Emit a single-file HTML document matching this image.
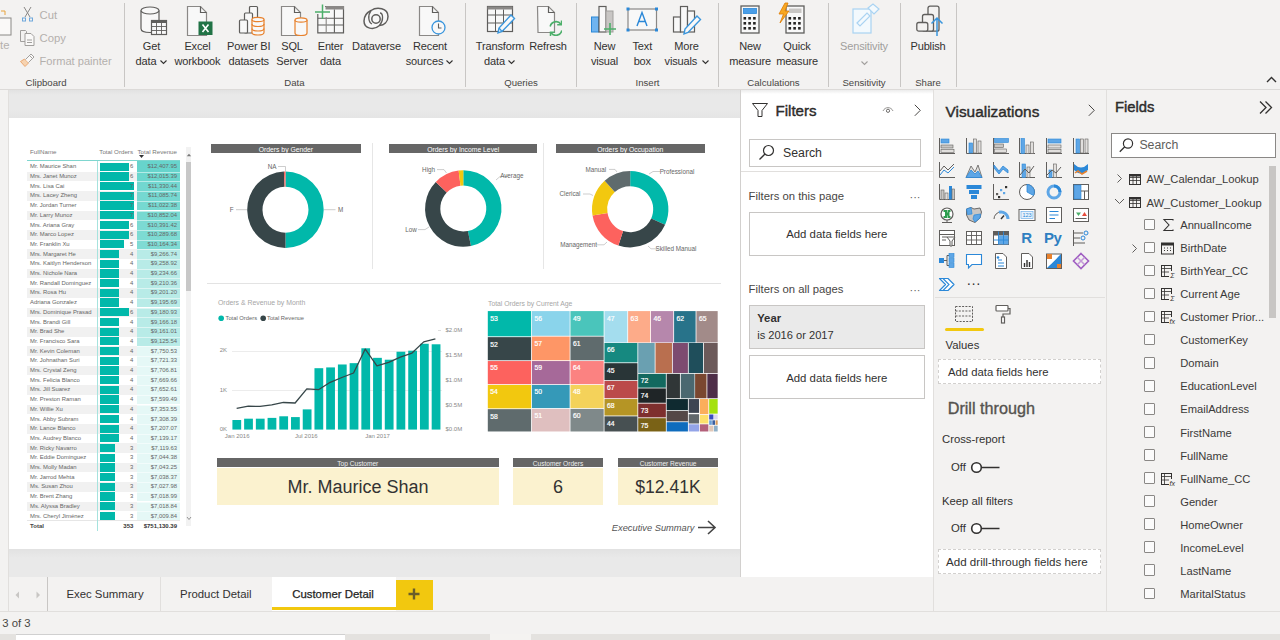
<!DOCTYPE html><html><head><meta charset="utf-8"><style>
html,body{margin:0;padding:0;width:1280px;height:640px;overflow:hidden;background:#f3f2f1;position:relative;font-family:"Liberation Sans", sans-serif;}
.t{position:absolute;white-space:nowrap;}
.r{position:absolute;}
</style></head><body>
<div class="r" style="left:0.00px;top:0.00px;width:1280.00px;height:89.00px;background:#f3f2f1;"></div>
<div class="r" style="left:0.00px;top:89.00px;width:1280.00px;height:1.00px;background:#dcdad8;"></div>
<div class="r" style="left:9.00px;top:90.00px;width:731.00px;height:487.00px;background:#e9e9e9;background:linear-gradient(#e2e2e2 0px,#e9e9e9 5px,#e9e9e9 20px,#e5e5e5 27.5px,#e9e9e9 28px,#e9e9e9 100%);"></div>
<div class="r" style="left:0.00px;top:90.00px;width:8.00px;height:521.00px;background:#f3f2f1;"></div>
<div class="r" style="left:8.00px;top:90.00px;width:1.00px;height:521.00px;background:#e1dfdd;"></div>
<div class="r" style="left:9.00px;top:548.00px;width:731.00px;height:10.00px;background:linear-gradient(#e1e1e1,#e9e9e9);"></div>
<div class="r" style="left:9.00px;top:117.50px;width:731.00px;height:431.00px;background:#ffffff;"></div>
<div class="r" style="left:740.00px;top:90.00px;width:193.00px;height:487.00px;background:#ffffff;"></div>
<div class="r" style="left:740.00px;top:90.00px;width:1.00px;height:521.00px;background:#d2d0ce;"></div>
<div class="r" style="left:933.00px;top:90.00px;width:1.00px;height:521.00px;background:#e1dfdd;"></div>
<div class="r" style="left:1106.00px;top:90.00px;width:1.00px;height:521.00px;background:#e1dfdd;"></div>
<div class="r" style="left:9.00px;top:577.00px;width:924.00px;height:34.00px;background:#f3f2f1;"></div>
<div class="r" style="left:0.00px;top:611.00px;width:1280.00px;height:1.00px;background:#e1dfdd;"></div>
<div class="r" style="left:0.00px;top:634.00px;width:1280.00px;height:6.00px;background:#e4e2df;"></div>
<div class="r" style="left:16.30px;top:634.00px;width:329.00px;height:6.00px;background:#ffffff;border-top:1px solid #d0d0d0;box-sizing:border-box;"></div>
<div class="r" style="left:490.00px;top:634.00px;width:41.00px;height:6.00px;background:#f4f3f1;"></div>
<div class="r" style="left:124.00px;top:3.00px;width:1.00px;height:84.00px;background:#c8c6c4;"></div>
<div class="r" style="left:465.00px;top:3.00px;width:1.00px;height:84.00px;background:#c8c6c4;"></div>
<div class="r" style="left:576.00px;top:3.00px;width:1.00px;height:84.00px;background:#c8c6c4;"></div>
<div class="r" style="left:718.00px;top:3.00px;width:1.00px;height:84.00px;background:#c8c6c4;"></div>
<div class="r" style="left:828.00px;top:3.00px;width:1.00px;height:84.00px;background:#c8c6c4;"></div>
<div class="r" style="left:899.50px;top:3.00px;width:1.00px;height:84.00px;background:#c8c6c4;"></div>
<div class="r" style="left:956.00px;top:3.00px;width:1.00px;height:84.00px;background:#c8c6c4;"></div>
<div class="t" style="left:-254.00px;width:600px;text-align:center;top:76.74px;font-size:9.6px;line-height:11.52px;color:#484644;font-weight:normal;font-style:normal;letter-spacing:0px;">Clipboard</div>
<div class="t" style="left:-5.50px;width:600px;text-align:center;top:76.74px;font-size:9.6px;line-height:11.52px;color:#484644;font-weight:normal;font-style:normal;letter-spacing:0px;">Data</div>
<div class="t" style="left:221.00px;width:600px;text-align:center;top:76.74px;font-size:9.6px;line-height:11.52px;color:#484644;font-weight:normal;font-style:normal;letter-spacing:0px;">Queries</div>
<div class="t" style="left:347.50px;width:600px;text-align:center;top:76.74px;font-size:9.6px;line-height:11.52px;color:#484644;font-weight:normal;font-style:normal;letter-spacing:0px;">Insert</div>
<div class="t" style="left:473.50px;width:600px;text-align:center;top:76.74px;font-size:9.6px;line-height:11.52px;color:#484644;font-weight:normal;font-style:normal;letter-spacing:0px;">Calculations</div>
<div class="t" style="left:564.00px;width:600px;text-align:center;top:76.74px;font-size:9.6px;line-height:11.52px;color:#484644;font-weight:normal;font-style:normal;letter-spacing:0px;">Sensitivity</div>
<div class="t" style="left:628.00px;width:600px;text-align:center;top:76.74px;font-size:9.6px;line-height:11.52px;color:#484644;font-weight:normal;font-style:normal;letter-spacing:0px;">Share</div>
<div class="t" style="left:39.50px;top:8.52px;font-size:11.3px;line-height:13.56px;color:#b3b0ad;font-weight:normal;font-style:normal;letter-spacing:0px;">Cut</div>
<div class="t" style="left:39.50px;top:32.02px;font-size:11.3px;line-height:13.56px;color:#b3b0ad;font-weight:normal;font-style:normal;letter-spacing:0px;">Copy</div>
<div class="t" style="left:39.50px;top:55.14px;font-size:11.1px;line-height:13.32px;color:#b3b0ad;font-weight:normal;font-style:normal;letter-spacing:0px;">Format painter</div>
<div class="t" style="left:0.00px;top:39.22px;font-size:11.3px;line-height:13.56px;color:#b3b0ad;font-weight:normal;font-style:normal;letter-spacing:0px;">te</div>
<svg class="r" style="left:0px;top:8px;" width="14" height="28" viewBox="0 0 14 28"><rect x="-6" y="10" width="17" height="17" fill="#faf9f8" stroke="#8a8886" stroke-width="1"/><path d="M1 3h4v4" fill="none" stroke="#e8a33d" stroke-width="1"/></svg>
<svg class="r" style="left:21px;top:6px;" width="14" height="16" viewBox="0 0 14 16"><path d="M3 1 L9 11 M10 1 L4 11" stroke="#8a8886" stroke-width="1" fill="none"/><rect x="1.5" y="12" width="3" height="3" fill="none" stroke="#6fa8dc" stroke-width="1"/><rect x="8.5" y="12" width="3" height="3" fill="none" stroke="#6fa8dc" stroke-width="1"/></svg>
<svg class="r" style="left:19px;top:29px;" width="17" height="17" viewBox="0 0 17 17"><path d="M1.5 1.5h5l1 1v10h-6z" fill="none" stroke="#a19f9d"/><path d="M6 4.5h6l3 3v9h-9z" fill="#faf9f8" stroke="#a19f9d"/><path d="M8 11h5M8 13.5h5" stroke="#a19f9d"/></svg>
<svg class="r" style="left:19px;top:52px;" width="17" height="16" viewBox="0 0 17 16"><path d="M1.5 9.5 L6 14.5 L9.5 11 L5.5 7 Z" fill="#f6d3b0" stroke="#e8a36b" stroke-width="0.9"/><path d="M6.5 7.5 L12 2 L15 5 L9.5 10.5" fill="#faf9f8" stroke="#a19f9d" stroke-width="1"/><path d="M11 4 L13 6" stroke="#a19f9d"/></svg>
<div class="t" style="left:-148.50px;width:600px;text-align:center;top:39.80px;font-size:11px;line-height:13.20px;color:#323130;font-weight:normal;font-style:normal;letter-spacing:-0.15px;">Get</div>
<div class="t" style="left:-154.00px;width:600px;text-align:center;top:54.60px;font-size:11px;line-height:13.20px;color:#323130;font-weight:normal;font-style:normal;letter-spacing:-0.15px;">data</div>
<div class="t" style="left:-102.50px;width:600px;text-align:center;top:39.80px;font-size:11px;line-height:13.20px;color:#323130;font-weight:normal;font-style:normal;letter-spacing:-0.15px;">Excel</div>
<div class="t" style="left:-102.50px;width:600px;text-align:center;top:54.60px;font-size:11px;line-height:13.20px;color:#323130;font-weight:normal;font-style:normal;letter-spacing:-0.15px;">workbook</div>
<div class="t" style="left:-51.30px;width:600px;text-align:center;top:39.80px;font-size:11px;line-height:13.20px;color:#323130;font-weight:normal;font-style:normal;letter-spacing:-0.15px;">Power BI</div>
<div class="t" style="left:-51.30px;width:600px;text-align:center;top:54.60px;font-size:11px;line-height:13.20px;color:#323130;font-weight:normal;font-style:normal;letter-spacing:-0.15px;">datasets</div>
<div class="t" style="left:-8.00px;width:600px;text-align:center;top:39.80px;font-size:11px;line-height:13.20px;color:#323130;font-weight:normal;font-style:normal;letter-spacing:-0.15px;">SQL</div>
<div class="t" style="left:-8.00px;width:600px;text-align:center;top:54.60px;font-size:11px;line-height:13.20px;color:#323130;font-weight:normal;font-style:normal;letter-spacing:-0.15px;">Server</div>
<div class="t" style="left:30.50px;width:600px;text-align:center;top:39.80px;font-size:11px;line-height:13.20px;color:#323130;font-weight:normal;font-style:normal;letter-spacing:-0.15px;">Enter</div>
<div class="t" style="left:30.50px;width:600px;text-align:center;top:54.60px;font-size:11px;line-height:13.20px;color:#323130;font-weight:normal;font-style:normal;letter-spacing:-0.15px;">data</div>
<div class="t" style="left:76.50px;width:600px;text-align:center;top:39.80px;font-size:11px;line-height:13.20px;color:#323130;font-weight:normal;font-style:normal;letter-spacing:-0.15px;">Dataverse</div>
<div class="t" style="left:130.00px;width:600px;text-align:center;top:39.80px;font-size:11px;line-height:13.20px;color:#323130;font-weight:normal;font-style:normal;letter-spacing:-0.15px;">Recent</div>
<div class="t" style="left:124.50px;width:600px;text-align:center;top:54.60px;font-size:11px;line-height:13.20px;color:#323130;font-weight:normal;font-style:normal;letter-spacing:-0.15px;">sources</div>
<div class="t" style="left:200.00px;width:600px;text-align:center;top:39.80px;font-size:11px;line-height:13.20px;color:#323130;font-weight:normal;font-style:normal;letter-spacing:-0.15px;">Transform</div>
<div class="t" style="left:194.50px;width:600px;text-align:center;top:54.60px;font-size:11px;line-height:13.20px;color:#323130;font-weight:normal;font-style:normal;letter-spacing:-0.15px;">data</div>
<div class="t" style="left:248.00px;width:600px;text-align:center;top:39.80px;font-size:11px;line-height:13.20px;color:#323130;font-weight:normal;font-style:normal;letter-spacing:-0.15px;">Refresh</div>
<div class="t" style="left:304.50px;width:600px;text-align:center;top:39.80px;font-size:11px;line-height:13.20px;color:#323130;font-weight:normal;font-style:normal;letter-spacing:-0.15px;">New</div>
<div class="t" style="left:304.50px;width:600px;text-align:center;top:54.60px;font-size:11px;line-height:13.20px;color:#323130;font-weight:normal;font-style:normal;letter-spacing:-0.15px;">visual</div>
<div class="t" style="left:342.30px;width:600px;text-align:center;top:39.80px;font-size:11px;line-height:13.20px;color:#323130;font-weight:normal;font-style:normal;letter-spacing:-0.15px;">Text</div>
<div class="t" style="left:342.30px;width:600px;text-align:center;top:54.60px;font-size:11px;line-height:13.20px;color:#323130;font-weight:normal;font-style:normal;letter-spacing:-0.15px;">box</div>
<div class="t" style="left:386.40px;width:600px;text-align:center;top:39.80px;font-size:11px;line-height:13.20px;color:#323130;font-weight:normal;font-style:normal;letter-spacing:-0.15px;">More</div>
<div class="t" style="left:380.90px;width:600px;text-align:center;top:54.60px;font-size:11px;line-height:13.20px;color:#323130;font-weight:normal;font-style:normal;letter-spacing:-0.15px;">visuals</div>
<div class="t" style="left:450.00px;width:600px;text-align:center;top:39.80px;font-size:11px;line-height:13.20px;color:#323130;font-weight:normal;font-style:normal;letter-spacing:-0.15px;">New</div>
<div class="t" style="left:450.00px;width:600px;text-align:center;top:54.60px;font-size:11px;line-height:13.20px;color:#323130;font-weight:normal;font-style:normal;letter-spacing:-0.15px;">measure</div>
<div class="t" style="left:497.00px;width:600px;text-align:center;top:39.80px;font-size:11px;line-height:13.20px;color:#323130;font-weight:normal;font-style:normal;letter-spacing:-0.15px;">Quick</div>
<div class="t" style="left:497.00px;width:600px;text-align:center;top:54.60px;font-size:11px;line-height:13.20px;color:#323130;font-weight:normal;font-style:normal;letter-spacing:-0.15px;">measure</div>
<div class="t" style="left:564.00px;width:600px;text-align:center;top:39.80px;font-size:11px;line-height:13.20px;color:#a19f9d;font-weight:normal;font-style:normal;letter-spacing:-0.15px;">Sensitivity</div>
<div class="t" style="left:628.00px;width:600px;text-align:center;top:39.80px;font-size:11px;line-height:13.20px;color:#323130;font-weight:normal;font-style:normal;letter-spacing:-0.15px;">Publish</div>
<svg class="r" style="left:160px;top:59.5px;" width="7" height="5" viewBox="0 0 7 5"><path d="M0.5 0.5 L3.5 3.5 L6.5 0.5" fill="none" stroke="#323130" stroke-width="1.1"/></svg>
<svg class="r" style="left:446.2px;top:59.5px;" width="7" height="5" viewBox="0 0 7 5"><path d="M0.5 0.5 L3.5 3.5 L6.5 0.5" fill="none" stroke="#323130" stroke-width="1.1"/></svg>
<svg class="r" style="left:508px;top:59.5px;" width="7" height="5" viewBox="0 0 7 5"><path d="M0.5 0.5 L3.5 3.5 L6.5 0.5" fill="none" stroke="#323130" stroke-width="1.1"/></svg>
<svg class="r" style="left:702px;top:59.5px;" width="7" height="5" viewBox="0 0 7 5"><path d="M0.5 0.5 L3.5 3.5 L6.5 0.5" fill="none" stroke="#323130" stroke-width="1.1"/></svg>
<svg class="r" style="left:861px;top:60.5px;" width="7" height="5" viewBox="0 0 7 5"><path d="M0.5 0.5 L3.5 3.5 L6.5 0.5" fill="none" stroke="#a19f9d" stroke-width="1.1"/></svg>
<svg class="r" style="left:1266px;top:76px;" width="11" height="7" viewBox="0 0 11 7"><path d="M1 6 L5.5 1.5 L10 6" fill="none" stroke="#323130" stroke-width="1.4"/></svg>
<svg class="r" style="left:138px;top:5px;" width="30" height="31" viewBox="0 0 30 31"><path d="M3 5.5 v18 c0 2.5 4 4 9 4 s9-1.5 9-4 v-18" fill="#f8f8f8" stroke="#5f5e5c" stroke-width="1.2"/>
      <ellipse cx="12" cy="5.5" rx="9" ry="3.5" fill="#f8f8f8" stroke="#5f5e5c" stroke-width="1.2"/>
      <rect x="13.5" y="15.5" width="15" height="14" fill="#f8f8f8" stroke="#5f5e5c" stroke-width="1.2"/>
      <rect x="13.5" y="15.5" width="15" height="2.5" fill="#5f5e5c"/>
      <path d="M13.5 21.5h15M13.5 25.5h15M18.5 18v11.5M23.5 18v11.5" stroke="#5f5e5c" stroke-width="0.9"/></svg>
<svg class="r" style="left:186px;top:5px;" width="28" height="31" viewBox="0 0 28 31"><path d="M1.5 1.5 h13 l6 6 v23 h-19 z" fill="#f8f8f8" stroke="#8a8886" stroke-width="1.2"/>
      <path d="M14.5 1.5 v6 h6" fill="none" stroke="#5f5e5c" stroke-width="1.2"/>
      <rect x="12.5" y="16.5" width="14" height="13.5" fill="#217346"/>
      <path d="M16.5 19.5 L22.5 27 M22.5 19.5 L16.5 27" stroke="#fff" stroke-width="1.6"/></svg>
<svg class="r" style="left:238px;top:5px;" width="28" height="31" viewBox="0 0 28 31"><rect x="11.5" y="1.5" width="8" height="13" rx="1" fill="#f8f8f8" stroke="#5f5e5c" stroke-width="1.2"/>
      <rect x="6.5" y="8" width="8" height="20" rx="1" fill="#f8f8f8" stroke="#5f5e5c" stroke-width="1.2"/>
      <rect x="1.5" y="15" width="8" height="13" rx="1" fill="#f8f8f8" stroke="#5f5e5c" stroke-width="1.2"/>
      <path d="M14 14.5 v13 c0 1.5 2.5 2.5 6 2.5 s6-1 6-2.5 v-13" fill="#f8f8f8" stroke="#e8812c" stroke-width="1.2"/>
      <ellipse cx="20" cy="14.5" rx="6" ry="2.2" fill="#f8f8f8" stroke="#e8812c" stroke-width="1.2"/>
      <path d="M14 19 c0 1.5 2.5 2.5 6 2.5 s6-1 6-2.5 M14 23.5 c0 1.5 2.5 2.5 6 2.5 s6-1 6-2.5" fill="none" stroke="#e8812c" stroke-width="1.2"/></svg>
<svg class="r" style="left:280px;top:5px;" width="30" height="31" viewBox="0 0 30 31"><path d="M1.5 1.5 h13 l6 6 v23 h-19 z" fill="#f8f8f8" stroke="#8a8886" stroke-width="1.2"/>
      <path d="M14.5 1.5 v6 h6" fill="none" stroke="#5f5e5c" stroke-width="1.2"/>
      <path d="M15 15 v13 c0 1.5 2.5 2.5 6 2.5 s6-1 6-2.5 v-13" fill="#f8f8f8" stroke="#e8812c" stroke-width="1.2"/>
      <ellipse cx="21" cy="15" rx="6" ry="2.2" fill="#f8f8f8" stroke="#e8812c" stroke-width="1.2"/></svg>
<svg class="r" style="left:314px;top:3px;" width="32" height="32" viewBox="0 0 32 32"><path d="M3.8 11 V29.8 H29.5 V3.5 H11" fill="#f8f8f8" stroke="#5f5e5c" stroke-width="1.2"/>
      <rect x="11.5" y="3" width="18.5" height="3.5" fill="#8a8886"/>
      <path d="M3.8 15.2 H29.5 M3.8 22 H29.5 M20.4 6.5 V29.8" stroke="#5f5e5c" stroke-width="1.1"/>
      <path d="M12.2 14 V29.8" stroke="#8a8886" stroke-width="1.1"/>
      <path d="M8.5 1.5 V16 M1 8.9 H16" stroke="#4caf6a" stroke-width="1.5"/></svg>
<svg class="r" style="left:362px;top:7px;" width="28" height="24" viewBox="0 0 28 24"><path d="M9 3.5 C15 -0.5 26 1 26 9.5 C26 15 22 18 17.5 18.5 C12 23.5 2 22 2 14 C2 8.5 5 5.5 9 3.5 Z" fill="#f8f8f8" stroke="#5f5e5c" stroke-width="1.5"/>
      <circle cx="14" cy="12" r="4.2" fill="none" stroke="#5f5e5c" stroke-width="1.5"/>
      <path d="M9 3.5 C5 9 7 16 10 17 M17.5 18.5 C22 13 21 6 18 6" fill="none" stroke="#5f5e5c" stroke-width="1.3"/></svg>
<svg class="r" style="left:418px;top:5px;" width="30" height="31" viewBox="0 0 30 31"><path d="M1.5 1.5 h13 l6 6 v23 h-19 z" fill="#f8f8f8" stroke="#8a8886" stroke-width="1.2"/>
      <path d="M14.5 1.5 v6 h6" fill="none" stroke="#5f5e5c" stroke-width="1.2"/>
      <circle cx="20.5" cy="22.5" r="6.5" fill="#f8f8f8" stroke="#3a96dd" stroke-width="1.3"/>
      <path d="M20.5 18.5v4.5h3" fill="none" stroke="#5f5e5c" stroke-width="1.1"/></svg>
<svg class="r" style="left:486px;top:5px;" width="32" height="31" viewBox="0 0 32 31"><rect x="1.5" y="1.5" width="25" height="25" fill="#f8f8f8" stroke="#5f5e5c" stroke-width="1.2"/>
      <rect x="1.5" y="1.5" width="25" height="3" fill="#8a8886"/>
      <path d="M1.5 10h25M1.5 18h25M9.5 4.5v22M17.5 4.5v22" stroke="#5f5e5c" stroke-width="1"/>
      <path d="M12 28 L13 23 L25 10 L28.5 13.5 L16 26.5 Z" fill="#f8f8f8" stroke="#3a96dd" stroke-width="1.4"/>
      <path d="M13 23 L16 26.5" stroke="#3a96dd" stroke-width="1.2"/></svg>
<svg class="r" style="left:536px;top:5px;" width="26" height="31" viewBox="0 0 26 31"><path d="M1.5 1.5 h11 l6 6 v20 h-16.5 z" fill="#f8f8f8" stroke="#8a8886" stroke-width="1.2"/>
      <path d="M12.5 1.5 v6 h6" fill="none" stroke="#5f5e5c" stroke-width="1.2"/>
      <path d="M14.2 21.5 A6 6 0 0 1 24.8 19" fill="none" stroke="#4caf6a" stroke-width="1.6"/>
      <path d="M25.8 25.5 A6 6 0 0 1 15.2 28" fill="none" stroke="#4caf6a" stroke-width="1.6"/>
      <path d="M25.5 15.5 V19.8 H21.2" fill="none" stroke="#4caf6a" stroke-width="1.5"/>
      <path d="M14.5 31.5 V27.2 H18.8" fill="none" stroke="#4caf6a" stroke-width="1.5"/></svg>
<svg class="r" style="left:590px;top:5px;" width="32" height="31" viewBox="0 0 32 31"><rect x="1.5" y="12" width="7" height="15" fill="#6fb4f0" stroke="#2b88d8" stroke-width="1"/>
      <rect x="9" y="1.5" width="7" height="25.5" fill="#f8f8f8" stroke="#5f5e5c" stroke-width="1.2"/>
      <rect x="16" y="6" width="7" height="21" fill="#c8c6c4" stroke="#a19f9d" stroke-width="1"/>
      <path d="M20 18 v12 M14 24 h12" stroke="#4caf6a" stroke-width="1.6"/></svg>
<svg class="r" style="left:626px;top:7px;" width="33" height="26" viewBox="0 0 33 26"><rect x="2" y="2" width="28.5" height="21" fill="#f8f8f8" stroke="#8a8886" stroke-width="1.2"/>
      <rect x="0.5" y="0.5" width="3" height="3" fill="#2b88d8"/><rect x="29" y="0.5" width="3" height="3" fill="#2b88d8"/>
      <rect x="0.5" y="21.5" width="3" height="3" fill="#2b88d8"/><rect x="29" y="21.5" width="3" height="3" fill="#2b88d8"/>
      <path d="M11 19 L16 5.5 L21 19 M12.8 14.5h6.5" fill="none" stroke="#2b88d8" stroke-width="1.4"/></svg>
<svg class="r" style="left:672px;top:5px;" width="32" height="31" viewBox="0 0 32 31"><rect x="1.5" y="12" width="7" height="15" fill="#f8f8f8" stroke="#5f5e5c" stroke-width="1.2"/>
      <rect x="8.5" y="1.5" width="7" height="25.5" fill="#f8f8f8" stroke="#5f5e5c" stroke-width="1.2"/>
      <rect x="15.5" y="6" width="7" height="21" fill="#f8f8f8" stroke="#5f5e5c" stroke-width="1.2"/>
      <path d="M12 29 L13 24 L25 11 L28.5 14.5 L16 27.5 Z" fill="#f8f8f8" stroke="#3a96dd" stroke-width="1.4"/></svg>
<svg class="r" style="left:740px;top:5px;" width="21" height="30" viewBox="0 0 21 30"><rect x="1" y="1" width="18" height="27" fill="#f8f8f8" stroke="#5f5e5c" stroke-width="1.3"/>
      <rect x="3.5" y="3.5" width="13" height="5" fill="#4a9ee8" stroke="#2b88d8" stroke-width="0.8"/><rect x="3.5" y="12" width="2.6" height="2.6" fill="#252423"/><rect x="3.5" y="17" width="2.6" height="2.6" fill="#252423"/><rect x="3.5" y="22" width="2.6" height="2.6" fill="#252423"/><rect x="8.3" y="12" width="2.6" height="2.6" fill="#252423"/><rect x="8.3" y="17" width="2.6" height="2.6" fill="#252423"/><rect x="8.3" y="22" width="2.6" height="2.6" fill="#252423"/><rect x="13.1" y="12" width="2.6" height="2.6" fill="#252423"/><rect x="13.1" y="17" width="2.6" height="2.6" fill="#252423"/><rect x="13.1" y="22" width="2.6" height="2.6" fill="#252423"/></svg>
<svg class="r" style="left:777px;top:2px;" width="30" height="33" viewBox="0 0 30 33"><rect x="9" y="4" width="18" height="27" fill="#f8f8f8" stroke="#5f5e5c" stroke-width="1.3"/>
      <rect x="12" y="6.5" width="12.5" height="4.5" fill="#c8c6c4"/><rect x="11.5" y="15" width="2.6" height="2.6" fill="#252423"/><rect x="11.5" y="20" width="2.6" height="2.6" fill="#252423"/><rect x="11.5" y="25" width="2.6" height="2.6" fill="#252423"/><rect x="16.3" y="15" width="2.6" height="2.6" fill="#252423"/><rect x="16.3" y="20" width="2.6" height="2.6" fill="#252423"/><rect x="16.3" y="25" width="2.6" height="2.6" fill="#252423"/><rect x="21.1" y="15" width="2.6" height="2.6" fill="#252423"/><rect x="21.1" y="20" width="2.6" height="2.6" fill="#252423"/><rect x="21.1" y="25" width="2.6" height="2.6" fill="#252423"/><path d="M8 1 L2 12 L6.5 12 L3 21 L12 9 L8 9 L11 1 Z" fill="#f7a823" stroke="#e07b00" stroke-width="0.8"/></svg>
<svg class="r" style="left:851px;top:3px;" width="30" height="32" viewBox="0 0 30 32"><rect x="2" y="6" width="18" height="24" fill="#f3f9fd" stroke="#a9d3f2" stroke-width="1.2"/>
      <path d="M6 20 L16 10 L19 13 L9 23 Z" fill="none" stroke="#a9d3f2" stroke-width="1.2"/>
      <path d="M17 5 L22 1 L28 6 L23 11 Z" fill="#f3f9fd" stroke="#a9d3f2" stroke-width="1.2"/></svg>
<svg class="r" style="left:915px;top:5px;" width="32" height="32" viewBox="0 0 32 32"><rect x="13" y="1.2" width="11" height="25" rx="2" fill="none" stroke="#5f5e5c" stroke-width="1.3"/>
      <rect x="7.5" y="9.5" width="11" height="16.7" rx="2" fill="#f3f2f1" stroke="#5f5e5c" stroke-width="1.3"/>
      <rect x="1.8" y="17.5" width="11" height="8.7" rx="2" fill="#f3f2f1" stroke="#5f5e5c" stroke-width="1.3"/>
      <path d="M22 31 V13 M16.5 18.5 L22 13 L27.5 18.5" fill="none" stroke="#3a96dd" stroke-width="1.5"/></svg>
<div class="t" style="left:30.00px;top:148.28px;font-size:6.2px;line-height:7.44px;color:#777;font-weight:normal;font-style:normal;letter-spacing:0px;">FullName</div>
<div class="t" style="right:1147.00px;top:148.28px;font-size:6.2px;line-height:7.44px;color:#777;font-weight:normal;font-style:normal;letter-spacing:0px;">Total Orders</div>
<div class="t" style="right:1103.00px;top:148.28px;font-size:6.2px;line-height:7.44px;color:#777;font-weight:normal;font-style:normal;letter-spacing:0px;">Total Revenue</div>
<svg class="r" style="left:139px;top:155px;" width="6" height="4" viewBox="0 0 6 4"><path d="M0 0 H5 L2.5 3 Z" fill="#333"/></svg>
<div class="r" style="left:27.00px;top:159.80px;width:153.00px;height:1.20px;background:#7fd6cf;"></div>
<div class="r" style="left:136.50px;top:160.80px;width:43.50px;height:10.90px;background:rgba(1,184,170,0.600);"></div>
<div class="r" style="left:100.30px;top:162.60px;width:28.80px;height:8.30px;background:#01b8aa;"></div>
<div class="t" style="left:30.00px;top:163.31px;font-size:5.9px;line-height:7.08px;color:#666666;font-weight:normal;font-style:normal;letter-spacing:0px;">Mr. Maurice Shan</div>
<div class="t" style="right:1146.70px;top:163.31px;font-size:5.9px;line-height:7.08px;color:#666666;font-weight:normal;font-style:normal;letter-spacing:0px;">6</div>
<div class="t" style="right:1103.00px;top:163.31px;font-size:5.9px;line-height:7.08px;color:#666666;font-weight:normal;font-style:normal;letter-spacing:0px;">$12,407.95</div>
<div class="r" style="left:27.00px;top:171.70px;width:109.50px;height:9.70px;background:#f1f1f1;"></div>
<div class="r" style="left:136.50px;top:171.70px;width:43.50px;height:9.70px;background:rgba(1,184,170,0.584);"></div>
<div class="r" style="left:136.50px;top:171.70px;width:43.50px;height:0.40px;background:rgba(255,255,255,0.5);"></div>
<div class="r" style="left:100.30px;top:172.30px;width:28.80px;height:8.30px;background:#01b8aa;"></div>
<div class="t" style="left:30.00px;top:173.01px;font-size:5.9px;line-height:7.08px;color:#666666;font-weight:normal;font-style:normal;letter-spacing:0px;">Mrs. Janet Munoz</div>
<div class="t" style="right:1146.70px;top:173.01px;font-size:5.9px;line-height:7.08px;color:#666666;font-weight:normal;font-style:normal;letter-spacing:0px;">6</div>
<div class="t" style="right:1103.00px;top:173.01px;font-size:5.9px;line-height:7.08px;color:#666666;font-weight:normal;font-style:normal;letter-spacing:0px;">$12,015.39</div>
<div class="r" style="left:136.50px;top:181.40px;width:43.50px;height:9.70px;background:rgba(1,184,170,0.555);"></div>
<div class="r" style="left:136.50px;top:181.40px;width:43.50px;height:0.40px;background:rgba(255,255,255,0.5);"></div>
<div class="r" style="left:100.30px;top:182.00px;width:33.60px;height:8.30px;background:#01b8aa;"></div>
<div class="t" style="left:30.00px;top:182.71px;font-size:5.9px;line-height:7.08px;color:#666666;font-weight:normal;font-style:normal;letter-spacing:0px;">Mrs. Lisa Cai</div>
<div class="t" style="right:1146.70px;top:182.71px;font-size:5.9px;line-height:7.08px;color:#666666;font-weight:normal;font-style:normal;letter-spacing:0px;">7</div>
<div class="t" style="right:1103.00px;top:182.71px;font-size:5.9px;line-height:7.08px;color:#666666;font-weight:normal;font-style:normal;letter-spacing:0px;">$11,330.44</div>
<div class="r" style="left:27.00px;top:191.10px;width:109.50px;height:9.70px;background:#f1f1f1;"></div>
<div class="r" style="left:136.50px;top:191.10px;width:43.50px;height:9.70px;background:rgba(1,184,170,0.545);"></div>
<div class="r" style="left:136.50px;top:191.10px;width:43.50px;height:0.40px;background:rgba(255,255,255,0.5);"></div>
<div class="r" style="left:100.30px;top:191.70px;width:33.60px;height:8.30px;background:#01b8aa;"></div>
<div class="t" style="left:30.00px;top:192.41px;font-size:5.9px;line-height:7.08px;color:#666666;font-weight:normal;font-style:normal;letter-spacing:0px;">Mrs. Lacey Zheng</div>
<div class="t" style="right:1146.70px;top:192.41px;font-size:5.9px;line-height:7.08px;color:#666666;font-weight:normal;font-style:normal;letter-spacing:0px;">7</div>
<div class="t" style="right:1103.00px;top:192.41px;font-size:5.9px;line-height:7.08px;color:#666666;font-weight:normal;font-style:normal;letter-spacing:0px;">$11,085.74</div>
<div class="r" style="left:136.50px;top:200.80px;width:43.50px;height:9.70px;background:rgba(1,184,170,0.543);"></div>
<div class="r" style="left:136.50px;top:200.80px;width:43.50px;height:0.40px;background:rgba(255,255,255,0.5);"></div>
<div class="r" style="left:100.30px;top:201.40px;width:33.60px;height:8.30px;background:#01b8aa;"></div>
<div class="t" style="left:30.00px;top:202.11px;font-size:5.9px;line-height:7.08px;color:#666666;font-weight:normal;font-style:normal;letter-spacing:0px;">Mr. Jordan Turner</div>
<div class="t" style="right:1146.70px;top:202.11px;font-size:5.9px;line-height:7.08px;color:#666666;font-weight:normal;font-style:normal;letter-spacing:0px;">7</div>
<div class="t" style="right:1103.00px;top:202.11px;font-size:5.9px;line-height:7.08px;color:#666666;font-weight:normal;font-style:normal;letter-spacing:0px;">$11,022.38</div>
<div class="r" style="left:27.00px;top:210.50px;width:109.50px;height:9.70px;background:#f1f1f1;"></div>
<div class="r" style="left:136.50px;top:210.50px;width:43.50px;height:9.70px;background:rgba(1,184,170,0.536);"></div>
<div class="r" style="left:136.50px;top:210.50px;width:43.50px;height:0.40px;background:rgba(255,255,255,0.5);"></div>
<div class="r" style="left:100.30px;top:211.10px;width:33.60px;height:8.30px;background:#01b8aa;"></div>
<div class="t" style="left:30.00px;top:211.81px;font-size:5.9px;line-height:7.08px;color:#666666;font-weight:normal;font-style:normal;letter-spacing:0px;">Mr. Larry Munoz</div>
<div class="t" style="right:1146.70px;top:211.81px;font-size:5.9px;line-height:7.08px;color:#666666;font-weight:normal;font-style:normal;letter-spacing:0px;">7</div>
<div class="t" style="right:1103.00px;top:211.81px;font-size:5.9px;line-height:7.08px;color:#666666;font-weight:normal;font-style:normal;letter-spacing:0px;">$10,852.04</div>
<div class="r" style="left:136.50px;top:220.20px;width:43.50px;height:9.70px;background:rgba(1,184,170,0.516);"></div>
<div class="r" style="left:136.50px;top:220.20px;width:43.50px;height:0.40px;background:rgba(255,255,255,0.5);"></div>
<div class="r" style="left:100.30px;top:220.80px;width:28.80px;height:8.30px;background:#01b8aa;"></div>
<div class="t" style="left:30.00px;top:221.51px;font-size:5.9px;line-height:7.08px;color:#666666;font-weight:normal;font-style:normal;letter-spacing:0px;">Mrs. Ariana Gray</div>
<div class="t" style="right:1146.70px;top:221.51px;font-size:5.9px;line-height:7.08px;color:#666666;font-weight:normal;font-style:normal;letter-spacing:0px;">6</div>
<div class="t" style="right:1103.00px;top:221.51px;font-size:5.9px;line-height:7.08px;color:#666666;font-weight:normal;font-style:normal;letter-spacing:0px;">$10,391.42</div>
<div class="r" style="left:27.00px;top:229.90px;width:109.50px;height:9.70px;background:#f1f1f1;"></div>
<div class="r" style="left:136.50px;top:229.90px;width:43.50px;height:9.70px;background:rgba(1,184,170,0.512);"></div>
<div class="r" style="left:136.50px;top:229.90px;width:43.50px;height:0.40px;background:rgba(255,255,255,0.5);"></div>
<div class="r" style="left:100.30px;top:230.50px;width:28.80px;height:8.30px;background:#01b8aa;"></div>
<div class="t" style="left:30.00px;top:231.21px;font-size:5.9px;line-height:7.08px;color:#666666;font-weight:normal;font-style:normal;letter-spacing:0px;">Mr. Marco Lopez</div>
<div class="t" style="right:1146.70px;top:231.21px;font-size:5.9px;line-height:7.08px;color:#666666;font-weight:normal;font-style:normal;letter-spacing:0px;">6</div>
<div class="t" style="right:1103.00px;top:231.21px;font-size:5.9px;line-height:7.08px;color:#666666;font-weight:normal;font-style:normal;letter-spacing:0px;">$10,289.68</div>
<div class="r" style="left:136.50px;top:239.60px;width:43.50px;height:9.70px;background:rgba(1,184,170,0.507);"></div>
<div class="r" style="left:136.50px;top:239.60px;width:43.50px;height:0.40px;background:rgba(255,255,255,0.5);"></div>
<div class="r" style="left:100.30px;top:240.20px;width:24.00px;height:8.30px;background:#01b8aa;"></div>
<div class="t" style="left:30.00px;top:240.91px;font-size:5.9px;line-height:7.08px;color:#666666;font-weight:normal;font-style:normal;letter-spacing:0px;">Mr. Franklin Xu</div>
<div class="t" style="right:1146.70px;top:240.91px;font-size:5.9px;line-height:7.08px;color:#666666;font-weight:normal;font-style:normal;letter-spacing:0px;">5</div>
<div class="t" style="right:1103.00px;top:240.91px;font-size:5.9px;line-height:7.08px;color:#666666;font-weight:normal;font-style:normal;letter-spacing:0px;">$10,164.34</div>
<div class="r" style="left:27.00px;top:249.30px;width:109.50px;height:9.70px;background:#f1f1f1;"></div>
<div class="r" style="left:136.50px;top:249.30px;width:43.50px;height:9.70px;background:rgba(1,184,170,0.28);"></div>
<div class="r" style="left:136.50px;top:249.30px;width:43.50px;height:0.40px;background:rgba(255,255,255,0.5);"></div>
<div class="r" style="left:100.30px;top:249.90px;width:19.20px;height:8.30px;background:#01b8aa;"></div>
<div class="t" style="left:30.00px;top:250.61px;font-size:5.9px;line-height:7.08px;color:#666666;font-weight:normal;font-style:normal;letter-spacing:0px;">Mrs. Margaret He</div>
<div class="t" style="right:1146.70px;top:250.61px;font-size:5.9px;line-height:7.08px;color:#666666;font-weight:normal;font-style:normal;letter-spacing:0px;">4</div>
<div class="t" style="right:1103.00px;top:250.61px;font-size:5.9px;line-height:7.08px;color:#666666;font-weight:normal;font-style:normal;letter-spacing:0px;">$9,266.74</div>
<div class="r" style="left:136.50px;top:259.00px;width:43.50px;height:9.70px;background:rgba(1,184,170,0.28);"></div>
<div class="r" style="left:136.50px;top:259.00px;width:43.50px;height:0.40px;background:rgba(255,255,255,0.5);"></div>
<div class="r" style="left:100.30px;top:259.60px;width:19.20px;height:8.30px;background:#01b8aa;"></div>
<div class="t" style="left:30.00px;top:260.31px;font-size:5.9px;line-height:7.08px;color:#666666;font-weight:normal;font-style:normal;letter-spacing:0px;">Mrs. Kaitlyn Henderson</div>
<div class="t" style="right:1146.70px;top:260.31px;font-size:5.9px;line-height:7.08px;color:#666666;font-weight:normal;font-style:normal;letter-spacing:0px;">4</div>
<div class="t" style="right:1103.00px;top:260.31px;font-size:5.9px;line-height:7.08px;color:#666666;font-weight:normal;font-style:normal;letter-spacing:0px;">$9,258.92</div>
<div class="r" style="left:27.00px;top:268.70px;width:109.50px;height:9.70px;background:#f1f1f1;"></div>
<div class="r" style="left:136.50px;top:268.70px;width:43.50px;height:9.70px;background:rgba(1,184,170,0.28);"></div>
<div class="r" style="left:136.50px;top:268.70px;width:43.50px;height:0.40px;background:rgba(255,255,255,0.5);"></div>
<div class="r" style="left:100.30px;top:269.30px;width:19.20px;height:8.30px;background:#01b8aa;"></div>
<div class="t" style="left:30.00px;top:270.01px;font-size:5.9px;line-height:7.08px;color:#666666;font-weight:normal;font-style:normal;letter-spacing:0px;">Mrs. Nichole Nara</div>
<div class="t" style="right:1146.70px;top:270.01px;font-size:5.9px;line-height:7.08px;color:#666666;font-weight:normal;font-style:normal;letter-spacing:0px;">4</div>
<div class="t" style="right:1103.00px;top:270.01px;font-size:5.9px;line-height:7.08px;color:#666666;font-weight:normal;font-style:normal;letter-spacing:0px;">$9,234.66</div>
<div class="r" style="left:136.50px;top:278.40px;width:43.50px;height:9.70px;background:rgba(1,184,170,0.28);"></div>
<div class="r" style="left:136.50px;top:278.40px;width:43.50px;height:0.40px;background:rgba(255,255,255,0.5);"></div>
<div class="r" style="left:100.30px;top:279.00px;width:19.20px;height:8.30px;background:#01b8aa;"></div>
<div class="t" style="left:30.00px;top:279.71px;font-size:5.9px;line-height:7.08px;color:#666666;font-weight:normal;font-style:normal;letter-spacing:0px;">Mr. Randall Dominguez</div>
<div class="t" style="right:1146.70px;top:279.71px;font-size:5.9px;line-height:7.08px;color:#666666;font-weight:normal;font-style:normal;letter-spacing:0px;">4</div>
<div class="t" style="right:1103.00px;top:279.71px;font-size:5.9px;line-height:7.08px;color:#666666;font-weight:normal;font-style:normal;letter-spacing:0px;">$9,210.36</div>
<div class="r" style="left:27.00px;top:288.10px;width:109.50px;height:9.70px;background:#f1f1f1;"></div>
<div class="r" style="left:136.50px;top:288.10px;width:43.50px;height:9.70px;background:rgba(1,184,170,0.28);"></div>
<div class="r" style="left:136.50px;top:288.10px;width:43.50px;height:0.40px;background:rgba(255,255,255,0.5);"></div>
<div class="r" style="left:100.30px;top:288.70px;width:19.20px;height:8.30px;background:#01b8aa;"></div>
<div class="t" style="left:30.00px;top:289.41px;font-size:5.9px;line-height:7.08px;color:#666666;font-weight:normal;font-style:normal;letter-spacing:0px;">Mrs. Rosa Hu</div>
<div class="t" style="right:1146.70px;top:289.41px;font-size:5.9px;line-height:7.08px;color:#666666;font-weight:normal;font-style:normal;letter-spacing:0px;">4</div>
<div class="t" style="right:1103.00px;top:289.41px;font-size:5.9px;line-height:7.08px;color:#666666;font-weight:normal;font-style:normal;letter-spacing:0px;">$9,201.20</div>
<div class="r" style="left:136.50px;top:297.80px;width:43.50px;height:9.70px;background:rgba(1,184,170,0.28);"></div>
<div class="r" style="left:136.50px;top:297.80px;width:43.50px;height:0.40px;background:rgba(255,255,255,0.5);"></div>
<div class="r" style="left:100.30px;top:298.40px;width:19.20px;height:8.30px;background:#01b8aa;"></div>
<div class="t" style="left:30.00px;top:299.11px;font-size:5.9px;line-height:7.08px;color:#666666;font-weight:normal;font-style:normal;letter-spacing:0px;">Adriana Gonzalez</div>
<div class="t" style="right:1146.70px;top:299.11px;font-size:5.9px;line-height:7.08px;color:#666666;font-weight:normal;font-style:normal;letter-spacing:0px;">4</div>
<div class="t" style="right:1103.00px;top:299.11px;font-size:5.9px;line-height:7.08px;color:#666666;font-weight:normal;font-style:normal;letter-spacing:0px;">$9,195.69</div>
<div class="r" style="left:27.00px;top:307.50px;width:109.50px;height:9.70px;background:#f1f1f1;"></div>
<div class="r" style="left:136.50px;top:307.50px;width:43.50px;height:9.70px;background:rgba(1,184,170,0.28);"></div>
<div class="r" style="left:136.50px;top:307.50px;width:43.50px;height:0.40px;background:rgba(255,255,255,0.5);"></div>
<div class="r" style="left:100.30px;top:308.10px;width:28.80px;height:8.30px;background:#01b8aa;"></div>
<div class="t" style="left:30.00px;top:308.81px;font-size:5.9px;line-height:7.08px;color:#666666;font-weight:normal;font-style:normal;letter-spacing:0px;">Mrs. Dominique Prasad</div>
<div class="t" style="right:1146.70px;top:308.81px;font-size:5.9px;line-height:7.08px;color:#666666;font-weight:normal;font-style:normal;letter-spacing:0px;">6</div>
<div class="t" style="right:1103.00px;top:308.81px;font-size:5.9px;line-height:7.08px;color:#666666;font-weight:normal;font-style:normal;letter-spacing:0px;">$9,180.93</div>
<div class="r" style="left:136.50px;top:317.20px;width:43.50px;height:9.70px;background:rgba(1,184,170,0.28);"></div>
<div class="r" style="left:136.50px;top:317.20px;width:43.50px;height:0.40px;background:rgba(255,255,255,0.5);"></div>
<div class="r" style="left:100.30px;top:317.80px;width:19.20px;height:8.30px;background:#01b8aa;"></div>
<div class="t" style="left:30.00px;top:318.51px;font-size:5.9px;line-height:7.08px;color:#666666;font-weight:normal;font-style:normal;letter-spacing:0px;">Mrs. Brandi Gill</div>
<div class="t" style="right:1146.70px;top:318.51px;font-size:5.9px;line-height:7.08px;color:#666666;font-weight:normal;font-style:normal;letter-spacing:0px;">4</div>
<div class="t" style="right:1103.00px;top:318.51px;font-size:5.9px;line-height:7.08px;color:#666666;font-weight:normal;font-style:normal;letter-spacing:0px;">$9,166.18</div>
<div class="r" style="left:27.00px;top:326.90px;width:109.50px;height:9.70px;background:#f1f1f1;"></div>
<div class="r" style="left:136.50px;top:326.90px;width:43.50px;height:9.70px;background:rgba(1,184,170,0.28);"></div>
<div class="r" style="left:136.50px;top:326.90px;width:43.50px;height:0.40px;background:rgba(255,255,255,0.5);"></div>
<div class="r" style="left:100.30px;top:327.50px;width:19.20px;height:8.30px;background:#01b8aa;"></div>
<div class="t" style="left:30.00px;top:328.21px;font-size:5.9px;line-height:7.08px;color:#666666;font-weight:normal;font-style:normal;letter-spacing:0px;">Mr. Brad She</div>
<div class="t" style="right:1146.70px;top:328.21px;font-size:5.9px;line-height:7.08px;color:#666666;font-weight:normal;font-style:normal;letter-spacing:0px;">4</div>
<div class="t" style="right:1103.00px;top:328.21px;font-size:5.9px;line-height:7.08px;color:#666666;font-weight:normal;font-style:normal;letter-spacing:0px;">$9,161.01</div>
<div class="r" style="left:136.50px;top:336.60px;width:43.50px;height:9.70px;background:rgba(1,184,170,0.28);"></div>
<div class="r" style="left:136.50px;top:336.60px;width:43.50px;height:0.40px;background:rgba(255,255,255,0.5);"></div>
<div class="r" style="left:100.30px;top:337.20px;width:19.20px;height:8.30px;background:#01b8aa;"></div>
<div class="t" style="left:30.00px;top:337.91px;font-size:5.9px;line-height:7.08px;color:#666666;font-weight:normal;font-style:normal;letter-spacing:0px;">Mr. Francisco Sara</div>
<div class="t" style="right:1146.70px;top:337.91px;font-size:5.9px;line-height:7.08px;color:#666666;font-weight:normal;font-style:normal;letter-spacing:0px;">4</div>
<div class="t" style="right:1103.00px;top:337.91px;font-size:5.9px;line-height:7.08px;color:#666666;font-weight:normal;font-style:normal;letter-spacing:0px;">$9,125.54</div>
<div class="r" style="left:27.00px;top:346.30px;width:109.50px;height:9.70px;background:#f1f1f1;"></div>
<div class="r" style="left:136.50px;top:346.30px;width:43.50px;height:9.70px;background:rgba(1,184,170,0.10);"></div>
<div class="r" style="left:136.50px;top:346.30px;width:43.50px;height:0.40px;background:rgba(255,255,255,0.5);"></div>
<div class="r" style="left:100.30px;top:346.90px;width:19.20px;height:8.30px;background:#01b8aa;"></div>
<div class="t" style="left:30.00px;top:347.61px;font-size:5.9px;line-height:7.08px;color:#666666;font-weight:normal;font-style:normal;letter-spacing:0px;">Mr. Kevin Coleman</div>
<div class="t" style="right:1146.70px;top:347.61px;font-size:5.9px;line-height:7.08px;color:#666666;font-weight:normal;font-style:normal;letter-spacing:0px;">4</div>
<div class="t" style="right:1103.00px;top:347.61px;font-size:5.9px;line-height:7.08px;color:#666666;font-weight:normal;font-style:normal;letter-spacing:0px;">$7,750.53</div>
<div class="r" style="left:136.50px;top:356.00px;width:43.50px;height:9.70px;background:rgba(1,184,170,0.10);"></div>
<div class="r" style="left:136.50px;top:356.00px;width:43.50px;height:0.40px;background:rgba(255,255,255,0.5);"></div>
<div class="r" style="left:100.30px;top:356.60px;width:19.20px;height:8.30px;background:#01b8aa;"></div>
<div class="t" style="left:30.00px;top:357.31px;font-size:5.9px;line-height:7.08px;color:#666666;font-weight:normal;font-style:normal;letter-spacing:0px;">Mr. Johnathan Suri</div>
<div class="t" style="right:1146.70px;top:357.31px;font-size:5.9px;line-height:7.08px;color:#666666;font-weight:normal;font-style:normal;letter-spacing:0px;">4</div>
<div class="t" style="right:1103.00px;top:357.31px;font-size:5.9px;line-height:7.08px;color:#666666;font-weight:normal;font-style:normal;letter-spacing:0px;">$7,721.33</div>
<div class="r" style="left:27.00px;top:365.70px;width:109.50px;height:9.70px;background:#f1f1f1;"></div>
<div class="r" style="left:136.50px;top:365.70px;width:43.50px;height:9.70px;background:rgba(1,184,170,0.10);"></div>
<div class="r" style="left:136.50px;top:365.70px;width:43.50px;height:0.40px;background:rgba(255,255,255,0.5);"></div>
<div class="r" style="left:100.30px;top:366.30px;width:19.20px;height:8.30px;background:#01b8aa;"></div>
<div class="t" style="left:30.00px;top:367.01px;font-size:5.9px;line-height:7.08px;color:#666666;font-weight:normal;font-style:normal;letter-spacing:0px;">Mrs. Crystal Zeng</div>
<div class="t" style="right:1146.70px;top:367.01px;font-size:5.9px;line-height:7.08px;color:#666666;font-weight:normal;font-style:normal;letter-spacing:0px;">4</div>
<div class="t" style="right:1103.00px;top:367.01px;font-size:5.9px;line-height:7.08px;color:#666666;font-weight:normal;font-style:normal;letter-spacing:0px;">$7,706.81</div>
<div class="r" style="left:136.50px;top:375.40px;width:43.50px;height:9.70px;background:rgba(1,184,170,0.10);"></div>
<div class="r" style="left:136.50px;top:375.40px;width:43.50px;height:0.40px;background:rgba(255,255,255,0.5);"></div>
<div class="r" style="left:100.30px;top:376.00px;width:19.20px;height:8.30px;background:#01b8aa;"></div>
<div class="t" style="left:30.00px;top:376.71px;font-size:5.9px;line-height:7.08px;color:#666666;font-weight:normal;font-style:normal;letter-spacing:0px;">Mrs. Felicia Blanco</div>
<div class="t" style="right:1146.70px;top:376.71px;font-size:5.9px;line-height:7.08px;color:#666666;font-weight:normal;font-style:normal;letter-spacing:0px;">4</div>
<div class="t" style="right:1103.00px;top:376.71px;font-size:5.9px;line-height:7.08px;color:#666666;font-weight:normal;font-style:normal;letter-spacing:0px;">$7,669.66</div>
<div class="r" style="left:27.00px;top:385.10px;width:109.50px;height:9.70px;background:#f1f1f1;"></div>
<div class="r" style="left:136.50px;top:385.10px;width:43.50px;height:9.70px;background:rgba(1,184,170,0.10);"></div>
<div class="r" style="left:136.50px;top:385.10px;width:43.50px;height:0.40px;background:rgba(255,255,255,0.5);"></div>
<div class="r" style="left:100.30px;top:385.70px;width:19.20px;height:8.30px;background:#01b8aa;"></div>
<div class="t" style="left:30.00px;top:386.41px;font-size:5.9px;line-height:7.08px;color:#666666;font-weight:normal;font-style:normal;letter-spacing:0px;">Mrs. Jill Suarez</div>
<div class="t" style="right:1146.70px;top:386.41px;font-size:5.9px;line-height:7.08px;color:#666666;font-weight:normal;font-style:normal;letter-spacing:0px;">4</div>
<div class="t" style="right:1103.00px;top:386.41px;font-size:5.9px;line-height:7.08px;color:#666666;font-weight:normal;font-style:normal;letter-spacing:0px;">$7,652.61</div>
<div class="r" style="left:136.50px;top:394.80px;width:43.50px;height:9.70px;background:rgba(1,184,170,0.10);"></div>
<div class="r" style="left:136.50px;top:394.80px;width:43.50px;height:0.40px;background:rgba(255,255,255,0.5);"></div>
<div class="r" style="left:100.30px;top:395.40px;width:19.20px;height:8.30px;background:#01b8aa;"></div>
<div class="t" style="left:30.00px;top:396.11px;font-size:5.9px;line-height:7.08px;color:#666666;font-weight:normal;font-style:normal;letter-spacing:0px;">Mr. Preston Raman</div>
<div class="t" style="right:1146.70px;top:396.11px;font-size:5.9px;line-height:7.08px;color:#666666;font-weight:normal;font-style:normal;letter-spacing:0px;">4</div>
<div class="t" style="right:1103.00px;top:396.11px;font-size:5.9px;line-height:7.08px;color:#666666;font-weight:normal;font-style:normal;letter-spacing:0px;">$7,599.49</div>
<div class="r" style="left:27.00px;top:404.50px;width:109.50px;height:9.70px;background:#f1f1f1;"></div>
<div class="r" style="left:136.50px;top:404.50px;width:43.50px;height:9.70px;background:rgba(1,184,170,0.10);"></div>
<div class="r" style="left:136.50px;top:404.50px;width:43.50px;height:0.40px;background:rgba(255,255,255,0.5);"></div>
<div class="r" style="left:100.30px;top:405.10px;width:19.20px;height:8.30px;background:#01b8aa;"></div>
<div class="t" style="left:30.00px;top:405.81px;font-size:5.9px;line-height:7.08px;color:#666666;font-weight:normal;font-style:normal;letter-spacing:0px;">Mr. Willie Xu</div>
<div class="t" style="right:1146.70px;top:405.81px;font-size:5.9px;line-height:7.08px;color:#666666;font-weight:normal;font-style:normal;letter-spacing:0px;">4</div>
<div class="t" style="right:1103.00px;top:405.81px;font-size:5.9px;line-height:7.08px;color:#666666;font-weight:normal;font-style:normal;letter-spacing:0px;">$7,353.55</div>
<div class="r" style="left:136.50px;top:414.20px;width:43.50px;height:9.70px;background:rgba(1,184,170,0.10);"></div>
<div class="r" style="left:136.50px;top:414.20px;width:43.50px;height:0.40px;background:rgba(255,255,255,0.5);"></div>
<div class="r" style="left:100.30px;top:414.80px;width:19.20px;height:8.30px;background:#01b8aa;"></div>
<div class="t" style="left:30.00px;top:415.51px;font-size:5.9px;line-height:7.08px;color:#666666;font-weight:normal;font-style:normal;letter-spacing:0px;">Mrs. Abby Subram</div>
<div class="t" style="right:1146.70px;top:415.51px;font-size:5.9px;line-height:7.08px;color:#666666;font-weight:normal;font-style:normal;letter-spacing:0px;">4</div>
<div class="t" style="right:1103.00px;top:415.51px;font-size:5.9px;line-height:7.08px;color:#666666;font-weight:normal;font-style:normal;letter-spacing:0px;">$7,308.39</div>
<div class="r" style="left:27.00px;top:423.90px;width:109.50px;height:9.70px;background:#f1f1f1;"></div>
<div class="r" style="left:136.50px;top:423.90px;width:43.50px;height:9.70px;background:rgba(1,184,170,0.10);"></div>
<div class="r" style="left:136.50px;top:423.90px;width:43.50px;height:0.40px;background:rgba(255,255,255,0.5);"></div>
<div class="r" style="left:100.30px;top:424.50px;width:19.20px;height:8.30px;background:#01b8aa;"></div>
<div class="t" style="left:30.00px;top:425.21px;font-size:5.9px;line-height:7.08px;color:#666666;font-weight:normal;font-style:normal;letter-spacing:0px;">Mr. Lance Blanco</div>
<div class="t" style="right:1146.70px;top:425.21px;font-size:5.9px;line-height:7.08px;color:#666666;font-weight:normal;font-style:normal;letter-spacing:0px;">4</div>
<div class="t" style="right:1103.00px;top:425.21px;font-size:5.9px;line-height:7.08px;color:#666666;font-weight:normal;font-style:normal;letter-spacing:0px;">$7,207.07</div>
<div class="r" style="left:136.50px;top:433.60px;width:43.50px;height:9.70px;background:rgba(1,184,170,0.10);"></div>
<div class="r" style="left:136.50px;top:433.60px;width:43.50px;height:0.40px;background:rgba(255,255,255,0.5);"></div>
<div class="r" style="left:100.30px;top:434.20px;width:19.20px;height:8.30px;background:#01b8aa;"></div>
<div class="t" style="left:30.00px;top:434.91px;font-size:5.9px;line-height:7.08px;color:#666666;font-weight:normal;font-style:normal;letter-spacing:0px;">Mrs. Audrey Blanco</div>
<div class="t" style="right:1146.70px;top:434.91px;font-size:5.9px;line-height:7.08px;color:#666666;font-weight:normal;font-style:normal;letter-spacing:0px;">4</div>
<div class="t" style="right:1103.00px;top:434.91px;font-size:5.9px;line-height:7.08px;color:#666666;font-weight:normal;font-style:normal;letter-spacing:0px;">$7,139.17</div>
<div class="r" style="left:27.00px;top:443.30px;width:109.50px;height:9.70px;background:#f1f1f1;"></div>
<div class="r" style="left:136.50px;top:443.30px;width:43.50px;height:9.70px;background:rgba(1,184,170,0.10);"></div>
<div class="r" style="left:136.50px;top:443.30px;width:43.50px;height:0.40px;background:rgba(255,255,255,0.5);"></div>
<div class="r" style="left:100.30px;top:443.90px;width:14.40px;height:8.30px;background:#01b8aa;"></div>
<div class="t" style="left:30.00px;top:444.61px;font-size:5.9px;line-height:7.08px;color:#666666;font-weight:normal;font-style:normal;letter-spacing:0px;">Mr. Ricky Navarro</div>
<div class="t" style="right:1146.70px;top:444.61px;font-size:5.9px;line-height:7.08px;color:#666666;font-weight:normal;font-style:normal;letter-spacing:0px;">3</div>
<div class="t" style="right:1103.00px;top:444.61px;font-size:5.9px;line-height:7.08px;color:#666666;font-weight:normal;font-style:normal;letter-spacing:0px;">$7,119.63</div>
<div class="r" style="left:136.50px;top:453.00px;width:43.50px;height:9.70px;background:rgba(1,184,170,0.10);"></div>
<div class="r" style="left:136.50px;top:453.00px;width:43.50px;height:0.40px;background:rgba(255,255,255,0.5);"></div>
<div class="r" style="left:100.30px;top:453.60px;width:14.40px;height:8.30px;background:#01b8aa;"></div>
<div class="t" style="left:30.00px;top:454.31px;font-size:5.9px;line-height:7.08px;color:#666666;font-weight:normal;font-style:normal;letter-spacing:0px;">Mr. Eddie Dominguez</div>
<div class="t" style="right:1146.70px;top:454.31px;font-size:5.9px;line-height:7.08px;color:#666666;font-weight:normal;font-style:normal;letter-spacing:0px;">3</div>
<div class="t" style="right:1103.00px;top:454.31px;font-size:5.9px;line-height:7.08px;color:#666666;font-weight:normal;font-style:normal;letter-spacing:0px;">$7,044.38</div>
<div class="r" style="left:27.00px;top:462.70px;width:109.50px;height:9.70px;background:#f1f1f1;"></div>
<div class="r" style="left:136.50px;top:462.70px;width:43.50px;height:9.70px;background:rgba(1,184,170,0.10);"></div>
<div class="r" style="left:136.50px;top:462.70px;width:43.50px;height:0.40px;background:rgba(255,255,255,0.5);"></div>
<div class="r" style="left:100.30px;top:463.30px;width:14.40px;height:8.30px;background:#01b8aa;"></div>
<div class="t" style="left:30.00px;top:464.01px;font-size:5.9px;line-height:7.08px;color:#666666;font-weight:normal;font-style:normal;letter-spacing:0px;">Mrs. Molly Madan</div>
<div class="t" style="right:1146.70px;top:464.01px;font-size:5.9px;line-height:7.08px;color:#666666;font-weight:normal;font-style:normal;letter-spacing:0px;">3</div>
<div class="t" style="right:1103.00px;top:464.01px;font-size:5.9px;line-height:7.08px;color:#666666;font-weight:normal;font-style:normal;letter-spacing:0px;">$7,043.25</div>
<div class="r" style="left:136.50px;top:472.40px;width:43.50px;height:9.70px;background:rgba(1,184,170,0.10);"></div>
<div class="r" style="left:136.50px;top:472.40px;width:43.50px;height:0.40px;background:rgba(255,255,255,0.5);"></div>
<div class="r" style="left:100.30px;top:473.00px;width:14.40px;height:8.30px;background:#01b8aa;"></div>
<div class="t" style="left:30.00px;top:473.71px;font-size:5.9px;line-height:7.08px;color:#666666;font-weight:normal;font-style:normal;letter-spacing:0px;">Mr. Jarrod Mehta</div>
<div class="t" style="right:1146.70px;top:473.71px;font-size:5.9px;line-height:7.08px;color:#666666;font-weight:normal;font-style:normal;letter-spacing:0px;">3</div>
<div class="t" style="right:1103.00px;top:473.71px;font-size:5.9px;line-height:7.08px;color:#666666;font-weight:normal;font-style:normal;letter-spacing:0px;">$7,038.37</div>
<div class="r" style="left:27.00px;top:482.10px;width:109.50px;height:9.70px;background:#f1f1f1;"></div>
<div class="r" style="left:136.50px;top:482.10px;width:43.50px;height:9.70px;background:rgba(1,184,170,0.10);"></div>
<div class="r" style="left:136.50px;top:482.10px;width:43.50px;height:0.40px;background:rgba(255,255,255,0.5);"></div>
<div class="r" style="left:100.30px;top:482.70px;width:14.40px;height:8.30px;background:#01b8aa;"></div>
<div class="t" style="left:30.00px;top:483.41px;font-size:5.9px;line-height:7.08px;color:#666666;font-weight:normal;font-style:normal;letter-spacing:0px;">Ms. Susan Zhou</div>
<div class="t" style="right:1146.70px;top:483.41px;font-size:5.9px;line-height:7.08px;color:#666666;font-weight:normal;font-style:normal;letter-spacing:0px;">3</div>
<div class="t" style="right:1103.00px;top:483.41px;font-size:5.9px;line-height:7.08px;color:#666666;font-weight:normal;font-style:normal;letter-spacing:0px;">$7,027.98</div>
<div class="r" style="left:136.50px;top:491.80px;width:43.50px;height:9.70px;background:rgba(1,184,170,0.10);"></div>
<div class="r" style="left:136.50px;top:491.80px;width:43.50px;height:0.40px;background:rgba(255,255,255,0.5);"></div>
<div class="r" style="left:100.30px;top:492.40px;width:14.40px;height:8.30px;background:#01b8aa;"></div>
<div class="t" style="left:30.00px;top:493.11px;font-size:5.9px;line-height:7.08px;color:#666666;font-weight:normal;font-style:normal;letter-spacing:0px;">Mr. Brent Zhang</div>
<div class="t" style="right:1146.70px;top:493.11px;font-size:5.9px;line-height:7.08px;color:#666666;font-weight:normal;font-style:normal;letter-spacing:0px;">3</div>
<div class="t" style="right:1103.00px;top:493.11px;font-size:5.9px;line-height:7.08px;color:#666666;font-weight:normal;font-style:normal;letter-spacing:0px;">$7,018.99</div>
<div class="r" style="left:27.00px;top:501.50px;width:109.50px;height:9.70px;background:#f1f1f1;"></div>
<div class="r" style="left:136.50px;top:501.50px;width:43.50px;height:9.70px;background:rgba(1,184,170,0.10);"></div>
<div class="r" style="left:136.50px;top:501.50px;width:43.50px;height:0.40px;background:rgba(255,255,255,0.5);"></div>
<div class="r" style="left:100.30px;top:502.10px;width:14.40px;height:8.30px;background:#01b8aa;"></div>
<div class="t" style="left:30.00px;top:502.81px;font-size:5.9px;line-height:7.08px;color:#666666;font-weight:normal;font-style:normal;letter-spacing:0px;">Ms. Alyssa Bradley</div>
<div class="t" style="right:1146.70px;top:502.81px;font-size:5.9px;line-height:7.08px;color:#666666;font-weight:normal;font-style:normal;letter-spacing:0px;">3</div>
<div class="t" style="right:1103.00px;top:502.81px;font-size:5.9px;line-height:7.08px;color:#666666;font-weight:normal;font-style:normal;letter-spacing:0px;">$7,018.84</div>
<div class="r" style="left:136.50px;top:511.20px;width:43.50px;height:9.70px;background:rgba(1,184,170,0.10);"></div>
<div class="r" style="left:136.50px;top:511.20px;width:43.50px;height:0.40px;background:rgba(255,255,255,0.5);"></div>
<div class="r" style="left:100.30px;top:511.80px;width:14.40px;height:8.30px;background:#01b8aa;"></div>
<div class="t" style="left:30.00px;top:512.51px;font-size:5.9px;line-height:7.08px;color:#666666;font-weight:normal;font-style:normal;letter-spacing:0px;">Mrs. Cheryl Jiménez</div>
<div class="t" style="right:1146.70px;top:512.51px;font-size:5.9px;line-height:7.08px;color:#666666;font-weight:normal;font-style:normal;letter-spacing:0px;">3</div>
<div class="t" style="right:1103.00px;top:512.51px;font-size:5.9px;line-height:7.08px;color:#666666;font-weight:normal;font-style:normal;letter-spacing:0px;">$7,009.84</div>
<div class="r" style="left:27.00px;top:520.30px;width:153.00px;height:0.80px;background:#e6e6e6;"></div>
<div class="r" style="left:96.60px;top:161.00px;width:1.60px;height:370.00px;background:#a6e3de;"></div>
<div class="t" style="left:30.00px;top:523.10px;font-size:6.0px;line-height:7.20px;color:#444;font-weight:bold;font-style:normal;letter-spacing:0px;">Total</div>
<div class="t" style="right:1146.70px;top:523.10px;font-size:6.0px;line-height:7.20px;color:#333;font-weight:bold;font-style:normal;letter-spacing:0px;">353</div>
<div class="t" style="right:1103.00px;top:523.10px;font-size:6.0px;line-height:7.20px;color:#333;font-weight:bold;font-style:normal;letter-spacing:0px;">$751,130.39</div>
<div class="r" style="left:185.80px;top:147.00px;width:5.00px;height:379.00px;background:#f2f2f2;"></div>
<div class="r" style="left:185.80px;top:162.00px;width:4.80px;height:129.00px;background:#c8c8c8;"></div>
<svg class="r" style="left:185.5px;top:152.5px;" width="6" height="4" viewBox="0 0 6 4"><path d="M0.8 3.2 L3 0.8 L5.2 3.2 Z" fill="#777"/></svg>
<svg class="r" style="left:185.5px;top:516px;" width="6" height="5" viewBox="0 0 6 5"><path d="M1 1 L3 3.5 L5 1" fill="none" stroke="#888" stroke-width="0.9"/></svg>
<div class="r" style="left:371.50px;top:143.00px;width:1.00px;height:126.00px;background:#e6e6e6;"></div>
<div class="r" style="left:542.50px;top:143.00px;width:1.00px;height:126.00px;background:#e6e6e6;"></div>
<div class="r" style="left:207.00px;top:283.00px;width:514.00px;height:1.00px;background:#e3e3e3;"></div>
<div class="r" style="left:211.25px;top:144.30px;width:149.25px;height:9.00px;background:#666666;"></div>
<div class="t" style="left:-14.12px;width:600px;text-align:center;top:145.52px;font-size:6.8px;line-height:8.16px;color:#ffffff;font-weight:normal;font-style:normal;letter-spacing:0px;">Orders by Gender</div>
<svg class="r" style="left:200px;top:130px;" width="540" height="150" viewBox="0 0 540 150"><path d="M85.50 41.50 A38.2 38.2 0 0 1 85.50 117.90 L85.50 102.70 A23 23 0 0 0 85.50 56.70 Z" fill="#01b8aa"/><path d="M85.50 117.90 A38.2 38.2 0 0 1 83.90 41.53 L84.54 56.72 A23 23 0 0 0 85.50 102.70 Z" fill="#374649"/><path d="M83.90 41.53 A38.2 38.2 0 0 1 85.50 41.50 L85.50 56.70 A23 23 0 0 0 84.54 56.72 Z" fill="#fd625e"/></svg>
<div class="r" style="left:389.20px;top:144.30px;width:148.10px;height:9.00px;background:#666666;"></div>
<div class="t" style="left:163.25px;width:600px;text-align:center;top:145.52px;font-size:6.8px;line-height:8.16px;color:#ffffff;font-weight:normal;font-style:normal;letter-spacing:0px;">Orders by Income Level</div>
<svg class="r" style="left:200px;top:130px;" width="540" height="150" viewBox="0 0 540 150"><path d="M263.30 40.30 A38.2 38.2 0 0 1 270.92 115.93 L267.89 101.04 A23 23 0 0 0 263.30 55.50 Z" fill="#01b8aa"/><path d="M270.92 115.93 A38.2 38.2 0 0 1 235.82 51.96 L246.76 62.52 A23 23 0 0 0 267.89 101.04 Z" fill="#374649"/><path d="M235.82 51.96 A38.2 38.2 0 0 1 258.64 40.58 L260.50 55.67 A23 23 0 0 0 246.76 62.52 Z" fill="#fd625e"/><path d="M258.64 40.58 A38.2 38.2 0 0 1 263.30 40.30 L263.30 55.50 A23 23 0 0 0 260.50 55.67 Z" fill="#f2c80f"/></svg>
<div class="r" style="left:556.00px;top:144.30px;width:148.70px;height:9.00px;background:#666666;"></div>
<div class="t" style="left:330.35px;width:600px;text-align:center;top:145.52px;font-size:6.8px;line-height:8.16px;color:#ffffff;font-weight:normal;font-style:normal;letter-spacing:0px;">Orders by Occupation</div>
<svg class="r" style="left:200px;top:130px;" width="540" height="150" viewBox="0 0 540 150"><path d="M430.20 41.00 A38.2 38.2 0 0 1 465.10 94.74 L451.21 88.55 A23 23 0 0 0 430.20 56.20 Z" fill="#01b8aa"/><path d="M465.10 94.74 A38.2 38.2 0 0 1 418.40 115.53 L423.09 101.07 A23 23 0 0 0 451.21 88.55 Z" fill="#374649"/><path d="M418.40 115.53 A38.2 38.2 0 0 1 392.52 85.50 L407.52 83.00 A23 23 0 0 0 423.09 101.07 Z" fill="#fd625e"/><path d="M392.52 85.50 A38.2 38.2 0 0 1 404.64 50.81 L414.81 62.11 A23 23 0 0 0 407.52 83.00 Z" fill="#f2c80f"/><path d="M404.64 50.81 A38.2 38.2 0 0 1 430.20 41.00 L430.20 56.20 A23 23 0 0 0 414.81 62.11 Z" fill="#5f6b6d"/></svg>
<svg class="r" style="left:0px;top:0px;left:0;top:0;" width="740" height="300" viewBox="0 0 740 300"><g stroke="#b8b8b8" stroke-width="0.7" fill="none"><path d="M278 166.5 H285.5 V171.5"/><path d="M236 209.7 H247"/><path d="M324 209.7 H335.5"/><path d="M437 169.6 H444 L446.5 173"/><path d="M500 176.5 H508 M500 176.5 L496 180"/><path d="M418 229.6 H425 L429 227"/><path d="M609 169.4 H615 L617 172"/><path d="M653 171.5 H660 M653 171.5 L649 174"/><path d="M583 194 H590 L593 195.5"/><path d="M596 244.8 H604 L607 242"/><path d="M651 248.8 H658 M651 248.8 L648 246"/></g></svg>
<div class="t" style="left:-28.00px;width:600px;text-align:center;top:163.02px;font-size:6.3px;line-height:7.56px;color:#666;font-weight:normal;font-style:normal;letter-spacing:0px;">NA</div>
<div class="t" style="left:-68.40px;width:600px;text-align:center;top:205.92px;font-size:6.3px;line-height:7.56px;color:#666;font-weight:normal;font-style:normal;letter-spacing:0px;">F</div>
<div class="t" style="left:40.60px;width:600px;text-align:center;top:205.92px;font-size:6.3px;line-height:7.56px;color:#666;font-weight:normal;font-style:normal;letter-spacing:0px;">M</div>
<div class="t" style="left:128.60px;width:600px;text-align:center;top:165.62px;font-size:6.3px;line-height:7.56px;color:#666;font-weight:normal;font-style:normal;letter-spacing:0px;">High</div>
<div class="t" style="left:211.80px;width:600px;text-align:center;top:172.42px;font-size:6.3px;line-height:7.56px;color:#666;font-weight:normal;font-style:normal;letter-spacing:0px;">Average</div>
<div class="t" style="left:111.00px;width:600px;text-align:center;top:225.82px;font-size:6.3px;line-height:7.56px;color:#666;font-weight:normal;font-style:normal;letter-spacing:0px;">Low</div>
<div class="t" style="left:295.80px;width:600px;text-align:center;top:165.62px;font-size:6.3px;line-height:7.56px;color:#666;font-weight:normal;font-style:normal;letter-spacing:0px;">Manual</div>
<div class="t" style="left:377.00px;width:600px;text-align:center;top:167.72px;font-size:6.3px;line-height:7.56px;color:#666;font-weight:normal;font-style:normal;letter-spacing:0px;">Professional</div>
<div class="t" style="left:270.00px;width:600px;text-align:center;top:190.22px;font-size:6.3px;line-height:7.56px;color:#666;font-weight:normal;font-style:normal;letter-spacing:0px;">Clerical</div>
<div class="t" style="left:278.70px;width:600px;text-align:center;top:241.02px;font-size:6.3px;line-height:7.56px;color:#666;font-weight:normal;font-style:normal;letter-spacing:0px;">Management</div>
<div class="t" style="left:376.00px;width:600px;text-align:center;top:245.02px;font-size:6.3px;line-height:7.56px;color:#666;font-weight:normal;font-style:normal;letter-spacing:0px;">Skilled Manual</div>
<div class="t" style="left:218.00px;top:299.26px;font-size:6.9px;line-height:8.28px;color:#a6a6a6;font-weight:normal;font-style:normal;letter-spacing:0px;">Orders &amp; Revenue by Month</div>
<svg class="r" style="left:217.5px;top:314.8px;" width="7" height="7" viewBox="0 0 7 7"><circle cx="3.2" cy="3.2" r="2.8" fill="#01b8aa"/></svg>
<div class="t" style="left:225.50px;top:314.52px;font-size:5.8px;line-height:6.96px;color:#666;font-weight:normal;font-style:normal;letter-spacing:0px;">Total Orders</div>
<svg class="r" style="left:260px;top:314.8px;" width="7" height="7" viewBox="0 0 7 7"><circle cx="3.2" cy="3.2" r="2.8" fill="#374649"/></svg>
<div class="t" style="left:267.00px;top:314.52px;font-size:5.8px;line-height:6.96px;color:#666;font-weight:normal;font-style:normal;letter-spacing:0px;">Total Revenue</div>
<div class="r" style="left:232.00px;top:350.80px;width:210.00px;height:0.70px;background:#ececec;"></div>
<div class="r" style="left:232.00px;top:390.20px;width:210.00px;height:0.70px;background:#ececec;"></div>
<div class="t" style="right:1053.00px;top:347.40px;font-size:6.0px;line-height:7.20px;color:#888;font-weight:normal;font-style:normal;letter-spacing:0px;">2K</div>
<div class="t" style="right:1053.00px;top:386.70px;font-size:6.0px;line-height:7.20px;color:#888;font-weight:normal;font-style:normal;letter-spacing:0px;">1K</div>
<div class="t" style="right:1053.00px;top:426.00px;font-size:6.0px;line-height:7.20px;color:#888;font-weight:normal;font-style:normal;letter-spacing:0px;">0K</div>
<div class="t" style="left:445.50px;top:326.90px;font-size:6.0px;line-height:7.20px;color:#888;font-weight:normal;font-style:normal;letter-spacing:0px;">$2.0M</div>
<div class="t" style="left:445.50px;top:352.10px;font-size:6.0px;line-height:7.20px;color:#888;font-weight:normal;font-style:normal;letter-spacing:0px;">$1.5M</div>
<div class="t" style="left:445.50px;top:377.00px;font-size:6.0px;line-height:7.20px;color:#888;font-weight:normal;font-style:normal;letter-spacing:0px;">$1.0M</div>
<div class="t" style="left:445.50px;top:401.80px;font-size:6.0px;line-height:7.20px;color:#888;font-weight:normal;font-style:normal;letter-spacing:0px;">$0.5M</div>
<div class="t" style="left:445.50px;top:426.00px;font-size:6.0px;line-height:7.20px;color:#888;font-weight:normal;font-style:normal;letter-spacing:0px;">$0.0M</div>
<div class="r" style="left:438.00px;top:330.20px;width:3.00px;height:0.70px;background:#ddd;"></div>
<div class="t" style="left:-62.80px;width:600px;text-align:center;top:432.60px;font-size:6.0px;line-height:7.20px;color:#888;font-weight:normal;font-style:normal;letter-spacing:0px;">Jan 2016</div>
<div class="t" style="left:6.30px;width:600px;text-align:center;top:432.60px;font-size:6.0px;line-height:7.20px;color:#888;font-weight:normal;font-style:normal;letter-spacing:0px;">Jul 2016</div>
<div class="t" style="left:77.50px;width:600px;text-align:center;top:432.60px;font-size:6.0px;line-height:7.20px;color:#888;font-weight:normal;font-style:normal;letter-spacing:0px;">Jan 2017</div>
<svg class="r" style="left:200px;top:280px;" width="280" height="170" viewBox="0 0 280 170"><rect x="32.41" y="140.01" width="8.77" height="9.56" fill="#01b8aa"/><rect x="44.13" y="138.68" width="8.77" height="10.89" fill="#01b8aa"/><rect x="55.86" y="138.68" width="8.77" height="10.89" fill="#01b8aa"/><rect x="67.58" y="137.89" width="8.77" height="11.69" fill="#01b8aa"/><rect x="79.30" y="136.29" width="8.77" height="13.28" fill="#01b8aa"/><rect x="91.02" y="137.09" width="8.77" height="12.49" fill="#01b8aa"/><rect x="102.74" y="129.38" width="8.77" height="20.19" fill="#01b8aa"/><rect x="114.46" y="88.20" width="8.77" height="61.37" fill="#01b8aa"/><rect x="126.18" y="87.41" width="8.77" height="62.17" fill="#01b8aa"/><rect x="137.91" y="84.48" width="8.77" height="65.09" fill="#01b8aa"/><rect x="149.63" y="83.16" width="8.77" height="66.42" fill="#01b8aa"/><rect x="161.35" y="68.28" width="8.77" height="81.30" fill="#01b8aa"/><rect x="173.07" y="77.84" width="8.77" height="71.73" fill="#01b8aa"/><rect x="184.79" y="79.70" width="8.77" height="69.87" fill="#01b8aa"/><rect x="196.51" y="71.73" width="8.77" height="77.84" fill="#01b8aa"/><rect x="208.24" y="70.67" width="8.77" height="78.91" fill="#01b8aa"/><rect x="219.96" y="63.76" width="8.77" height="85.81" fill="#01b8aa"/><rect x="231.68" y="64.29" width="8.77" height="85.28" fill="#01b8aa"/><path d="M36.66 128.32 L48.35 126.20 L60.04 126.46 L71.73 124.87 L83.42 122.48 L95.11 123.01 L106.80 108.93 L118.49 109.72 L130.18 102.28 L141.87 97.50 L153.56 92.99 L165.25 69.08 L176.94 85.81 L188.63 82.36 L200.32 77.05 L212.01 73.06 L223.70 61.90 L235.39 58.98" fill="none" stroke="#374649" stroke-width="1.3" stroke-linejoin="round"/></svg>
<div class="t" style="left:488.00px;top:300.32px;font-size:6.8px;line-height:8.16px;color:#a6a6a6;font-weight:normal;font-style:normal;letter-spacing:0px;">Total Orders by Current Age</div>
<svg class="r" style="left:470px;top:280px;" width="270" height="170" viewBox="0 0 270 170"><rect x="17.80" y="31.09" width="43.32" height="25.25" fill="#01b8aa"/><rect x="17.80" y="57.14" width="43.32" height="23.12" fill="#374649"/><rect x="17.80" y="81.05" width="43.32" height="23.12" fill="#fd625e"/><rect x="17.80" y="104.97" width="43.32" height="23.39" fill="#f2c80f"/><rect x="17.80" y="129.15" width="43.32" height="22.32" fill="#5f6b6d"/><rect x="61.92" y="31.09" width="37.74" height="24.71" fill="#8ad4eb"/><rect x="61.92" y="56.60" width="37.74" height="23.65" fill="#fe9666"/><rect x="61.92" y="81.05" width="37.74" height="23.12" fill="#a66999"/><rect x="61.92" y="104.97" width="37.74" height="23.12" fill="#3599b8"/><rect x="61.92" y="128.89" width="37.74" height="22.59" fill="#dfbfbf"/><rect x="100.45" y="31.09" width="33.22" height="24.71" fill="#4ac5bb"/><rect x="100.45" y="56.60" width="33.22" height="23.65" fill="#5f6b6d"/><rect x="100.45" y="81.05" width="33.22" height="23.12" fill="#fb8281"/><rect x="100.45" y="104.97" width="33.22" height="23.12" fill="#f4d25a"/><rect x="100.45" y="128.89" width="33.22" height="22.59" fill="#7f898a"/><rect x="134.47" y="31.09" width="22.85" height="31.36" fill="#a4ddee"/><rect x="158.12" y="31.09" width="22.06" height="31.36" fill="#fdab89"/><rect x="180.97" y="31.09" width="22.32" height="31.36" fill="#b687ac"/><rect x="204.09" y="31.09" width="21.53" height="31.36" fill="#28738a"/><rect x="226.42" y="31.09" width="21.26" height="31.36" fill="#a28b89"/><rect x="134.47" y="62.98" width="32.95" height="19.40" fill="#168980"/><rect x="134.47" y="83.18" width="32.95" height="17.01" fill="#293537"/><rect x="134.47" y="100.98" width="32.95" height="17.27" fill="#bb4a4a"/><rect x="134.47" y="119.05" width="32.95" height="16.48" fill="#b59525"/><rect x="134.47" y="136.33" width="32.95" height="15.15" fill="#475052"/><rect x="168.22" y="62.98" width="16.48" height="30.03" fill="#6aa0b1"/><rect x="185.49" y="62.98" width="16.48" height="30.03" fill="#b96f4f"/><rect x="202.76" y="62.98" width="15.15" height="30.03" fill="#7d4b70"/><rect x="218.71" y="62.98" width="14.35" height="30.03" fill="#1f4e5b"/><rect x="233.86" y="62.98" width="13.82" height="30.03" fill="#6c5a5a"/><rect x="168.22" y="93.81" width="27.64" height="13.82" fill="#12695f"/><rect x="168.22" y="108.42" width="27.64" height="14.35" fill="#1f2527"/><rect x="168.22" y="123.57" width="27.64" height="13.82" fill="#7e2f2e"/><rect x="168.22" y="138.19" width="27.64" height="13.29" fill="#7a6216"/><rect x="196.65" y="93.81" width="13.29" height="24.45" fill="#303637"/><rect x="210.74" y="93.81" width="13.82" height="24.45" fill="#4a6870"/><rect x="225.09" y="93.81" width="11.43" height="24.45" fill="#7a4730"/><rect x="237.31" y="93.81" width="10.36" height="24.45" fill="#4e2e48"/><rect x="196.65" y="119.05" width="21.26" height="11.16" fill="#0f2a30"/><rect x="196.65" y="131.01" width="21.26" height="10.36" fill="#544847"/><rect x="196.65" y="142.17" width="21.26" height="9.30" fill="#0f6cbd"/><rect x="218.71" y="119.05" width="10.36" height="13.82" fill="#3e4552"/><rect x="218.71" y="134.20" width="10.36" height="9.30" fill="#61676b"/><rect x="218.71" y="144.30" width="10.36" height="7.18" fill="#93a4e8"/><rect x="229.87" y="119.05" width="8.50" height="15.15" fill="#fbae5b"/><rect x="229.87" y="135.00" width="8.50" height="8.50" fill="#fddf6b"/><rect x="229.87" y="144.30" width="8.50" height="7.18" fill="#b3607a"/><rect x="239.17" y="119.05" width="8.50" height="14.62" fill="#a4e10e"/><rect x="239.17" y="134.47" width="4.25" height="5.05" fill="#3b4ec0"/><rect x="243.95" y="134.47" width="3.72" height="5.05" fill="#dcd8f0"/><rect x="239.17" y="140.31" width="2.66" height="4.52" fill="#6a9fd6"/><rect x="242.36" y="140.31" width="2.66" height="4.52" fill="#3a5fa0"/><rect x="245.55" y="140.31" width="2.13" height="4.52" fill="#d79a5a"/><rect x="239.17" y="145.63" width="4.25" height="5.85" fill="#e0c8b8"/><rect x="243.95" y="145.63" width="3.72" height="5.85" fill="#8fb0c8"/></svg>
<div class="t" style="left:490.30px;top:314.51px;font-size:6.8px;line-height:8.16px;color:#ffffff;font-weight:normal;font-style:normal;letter-spacing:0px;-webkit-text-stroke:0.2px #fff;">53</div>
<div class="t" style="left:490.30px;top:340.56px;font-size:6.8px;line-height:8.16px;color:#ffffff;font-weight:normal;font-style:normal;letter-spacing:0px;-webkit-text-stroke:0.2px #fff;">52</div>
<div class="t" style="left:490.30px;top:364.47px;font-size:6.8px;line-height:8.16px;color:#ffffff;font-weight:normal;font-style:normal;letter-spacing:0px;-webkit-text-stroke:0.2px #fff;">55</div>
<div class="t" style="left:490.30px;top:388.39px;font-size:6.8px;line-height:8.16px;color:#ffffff;font-weight:normal;font-style:normal;letter-spacing:0px;-webkit-text-stroke:0.2px #fff;">54</div>
<div class="t" style="left:490.30px;top:412.57px;font-size:6.8px;line-height:8.16px;color:#ffffff;font-weight:normal;font-style:normal;letter-spacing:0px;-webkit-text-stroke:0.2px #fff;">58</div>
<div class="t" style="left:534.42px;top:314.51px;font-size:6.8px;line-height:8.16px;color:#ffffff;font-weight:normal;font-style:normal;letter-spacing:0px;-webkit-text-stroke:0.2px #fff;">56</div>
<div class="t" style="left:534.42px;top:340.02px;font-size:6.8px;line-height:8.16px;color:#ffffff;font-weight:normal;font-style:normal;letter-spacing:0px;-webkit-text-stroke:0.2px #fff;">57</div>
<div class="t" style="left:534.42px;top:364.47px;font-size:6.8px;line-height:8.16px;color:#ffffff;font-weight:normal;font-style:normal;letter-spacing:0px;-webkit-text-stroke:0.2px #fff;">59</div>
<div class="t" style="left:534.42px;top:388.39px;font-size:6.8px;line-height:8.16px;color:#ffffff;font-weight:normal;font-style:normal;letter-spacing:0px;-webkit-text-stroke:0.2px #fff;">50</div>
<div class="t" style="left:534.42px;top:412.31px;font-size:6.8px;line-height:8.16px;color:#ffffff;font-weight:normal;font-style:normal;letter-spacing:0px;-webkit-text-stroke:0.2px #fff;">51</div>
<div class="t" style="left:572.95px;top:314.51px;font-size:6.8px;line-height:8.16px;color:#ffffff;font-weight:normal;font-style:normal;letter-spacing:0px;-webkit-text-stroke:0.2px #fff;">49</div>
<div class="t" style="left:572.95px;top:340.02px;font-size:6.8px;line-height:8.16px;color:#ffffff;font-weight:normal;font-style:normal;letter-spacing:0px;-webkit-text-stroke:0.2px #fff;">61</div>
<div class="t" style="left:572.95px;top:364.47px;font-size:6.8px;line-height:8.16px;color:#ffffff;font-weight:normal;font-style:normal;letter-spacing:0px;-webkit-text-stroke:0.2px #fff;">64</div>
<div class="t" style="left:572.95px;top:388.39px;font-size:6.8px;line-height:8.16px;color:#ffffff;font-weight:normal;font-style:normal;letter-spacing:0px;-webkit-text-stroke:0.2px #fff;">48</div>
<div class="t" style="left:572.95px;top:412.31px;font-size:6.8px;line-height:8.16px;color:#ffffff;font-weight:normal;font-style:normal;letter-spacing:0px;-webkit-text-stroke:0.2px #fff;">60</div>
<div class="t" style="left:606.97px;top:314.51px;font-size:6.8px;line-height:8.16px;color:#ffffff;font-weight:normal;font-style:normal;letter-spacing:0px;-webkit-text-stroke:0.2px #fff;">47</div>
<div class="t" style="left:630.62px;top:314.51px;font-size:6.8px;line-height:8.16px;color:#ffffff;font-weight:normal;font-style:normal;letter-spacing:0px;-webkit-text-stroke:0.2px #fff;">63</div>
<div class="t" style="left:653.47px;top:314.51px;font-size:6.8px;line-height:8.16px;color:#ffffff;font-weight:normal;font-style:normal;letter-spacing:0px;-webkit-text-stroke:0.2px #fff;">46</div>
<div class="t" style="left:676.59px;top:314.51px;font-size:6.8px;line-height:8.16px;color:#ffffff;font-weight:normal;font-style:normal;letter-spacing:0px;-webkit-text-stroke:0.2px #fff;">62</div>
<div class="t" style="left:698.92px;top:314.51px;font-size:6.8px;line-height:8.16px;color:#ffffff;font-weight:normal;font-style:normal;letter-spacing:0px;-webkit-text-stroke:0.2px #fff;">65</div>
<div class="t" style="left:606.97px;top:346.40px;font-size:6.8px;line-height:8.16px;color:#ffffff;font-weight:normal;font-style:normal;letter-spacing:0px;-webkit-text-stroke:0.2px #fff;">66</div>
<div class="t" style="left:606.97px;top:366.60px;font-size:6.8px;line-height:8.16px;color:#ffffff;font-weight:normal;font-style:normal;letter-spacing:0px;-webkit-text-stroke:0.2px #fff;">45</div>
<div class="t" style="left:606.97px;top:384.40px;font-size:6.8px;line-height:8.16px;color:#ffffff;font-weight:normal;font-style:normal;letter-spacing:0px;-webkit-text-stroke:0.2px #fff;">67</div>
<div class="t" style="left:606.97px;top:402.47px;font-size:6.8px;line-height:8.16px;color:#ffffff;font-weight:normal;font-style:normal;letter-spacing:0px;-webkit-text-stroke:0.2px #fff;">68</div>
<div class="t" style="left:606.97px;top:419.75px;font-size:6.8px;line-height:8.16px;color:#ffffff;font-weight:normal;font-style:normal;letter-spacing:0px;-webkit-text-stroke:0.2px #fff;">44</div>
<div class="t" style="left:640.72px;top:377.23px;font-size:6.8px;line-height:8.16px;color:#ffffff;font-weight:normal;font-style:normal;letter-spacing:0px;-webkit-text-stroke:0.2px #fff;">72</div>
<div class="t" style="left:640.72px;top:391.84px;font-size:6.8px;line-height:8.16px;color:#ffffff;font-weight:normal;font-style:normal;letter-spacing:0px;-webkit-text-stroke:0.2px #fff;">74</div>
<div class="t" style="left:640.72px;top:406.99px;font-size:6.8px;line-height:8.16px;color:#ffffff;font-weight:normal;font-style:normal;letter-spacing:0px;-webkit-text-stroke:0.2px #fff;">73</div>
<div class="t" style="left:640.72px;top:421.61px;font-size:6.8px;line-height:8.16px;color:#ffffff;font-weight:normal;font-style:normal;letter-spacing:0px;-webkit-text-stroke:0.2px #fff;">75</div>
<div class="r" style="left:216.90px;top:458.10px;width:281.80px;height:9.40px;background:#666666;"></div>
<div class="r" style="left:216.90px;top:467.50px;width:281.80px;height:37.50px;background:#fbf2cf;"></div>
<div class="r" style="left:512.70px;top:458.10px;width:90.70px;height:9.40px;background:#666666;"></div>
<div class="r" style="left:512.70px;top:467.50px;width:90.70px;height:37.50px;background:#fbf2cf;"></div>
<div class="r" style="left:618.10px;top:458.10px;width:100.00px;height:9.40px;background:#666666;"></div>
<div class="r" style="left:618.10px;top:467.50px;width:100.00px;height:37.50px;background:#fbf2cf;"></div>
<div class="t" style="left:57.80px;width:600px;text-align:center;top:459.84px;font-size:6.6px;line-height:7.92px;color:#eeeeee;font-weight:normal;font-style:normal;letter-spacing:0px;">Top Customer</div>
<div class="t" style="left:258.00px;width:600px;text-align:center;top:459.84px;font-size:6.6px;line-height:7.92px;color:#eeeeee;font-weight:normal;font-style:normal;letter-spacing:0px;">Customer Orders</div>
<div class="t" style="left:368.10px;width:600px;text-align:center;top:459.84px;font-size:6.6px;line-height:7.92px;color:#eeeeee;font-weight:normal;font-style:normal;letter-spacing:0px;">Customer Revenue</div>
<div class="t" style="left:58.00px;width:600px;text-align:center;top:477.00px;font-size:18px;line-height:21.60px;color:#333333;font-weight:normal;font-style:normal;letter-spacing:0px;">Mr. Maurice Shan</div>
<div class="t" style="left:258.00px;width:600px;text-align:center;top:477.00px;font-size:18px;line-height:21.60px;color:#333333;font-weight:normal;font-style:normal;letter-spacing:0px;">6</div>
<div class="t" style="left:368.00px;width:600px;text-align:center;top:477.24px;font-size:17.6px;line-height:21.12px;color:#333333;font-weight:normal;font-style:normal;letter-spacing:0px;">$12.41K</div>
<div class="t" style="right:585.50px;top:523.22px;font-size:9.3px;line-height:11.16px;color:#555555;font-weight:normal;font-style:italic;letter-spacing:0px;">Executive Summary</div>
<svg class="r" style="left:697px;top:518.5px;" width="20" height="17" viewBox="0 0 20 17"><path d="M1 8.5 H18 M11 2 L18 8.5 L11 15" fill="none" stroke="#444" stroke-width="1.6"/></svg>
<div class="r" style="left:741.00px;top:90.00px;width:192.00px;height:4.00px;background:linear-gradient(#ececec,#ffffff);"></div>
<svg class="r" style="left:751px;top:102px;" width="19" height="16" viewBox="0 0 19 16"><path d="M1.5 1.5 H16.5 L11 8.5 V14.5 H7 V8.5 Z" fill="none" stroke="#323130" stroke-width="1.0" stroke-linejoin="round"/></svg>
<div class="t" style="left:775.50px;top:101.94px;font-size:15.1px;line-height:18.12px;color:#323130;font-weight:normal;font-style:normal;letter-spacing:0px;-webkit-text-stroke:0.4px #252423;">Filters</div>
<svg class="r" style="left:881px;top:104px;" width="14" height="11" viewBox="0 0 14 11"><path d="M2 7 C4 2.5 10 2.5 12 7" fill="none" stroke="#8a8886" stroke-width="0.9"/><circle cx="7" cy="6.8" r="1.6" fill="none" stroke="#605e5c" stroke-width="0.9"/></svg>
<svg class="r" style="left:913px;top:103px;" width="10" height="15" viewBox="0 0 10 15"><path d="M1.8 1.8 L7.3 7.3 L1.8 12.8" fill="none" stroke="#484644" stroke-width="1.0"/></svg>
<div class="r" style="left:748.50px;top:139.00px;width:172.50px;height:28.20px;background:#ffffff;border:1px solid #c8c6c4;box-sizing:border-box;"></div>
<svg class="r" style="left:758px;top:144px;" width="18" height="18" viewBox="0 0 18 18"><circle cx="10.5" cy="6.5" r="5" fill="none" stroke="#323130" stroke-width="1.2"/><path d="M7 10 L1.5 15.5" stroke="#323130" stroke-width="1.3"/></svg>
<div class="t" style="left:783.00px;top:146.12px;font-size:12.3px;line-height:14.76px;color:#323130;font-weight:normal;font-style:normal;letter-spacing:0px;">Search</div>
<div class="r" style="left:741.00px;top:171.00px;width:192.00px;height:1.20px;background:#e1dfdd;"></div>
<div class="t" style="left:748.60px;top:189.72px;font-size:11.3px;line-height:13.56px;color:#484644;font-weight:normal;font-style:normal;letter-spacing:0px;">Filters on this page</div>
<div class="t" style="left:615.00px;width:600px;text-align:center;top:190.90px;font-size:11px;line-height:13.20px;color:#605e5c;font-weight:normal;font-style:normal;letter-spacing:0px;">···</div>
<div class="r" style="left:748.50px;top:212.00px;width:176.50px;height:43.60px;background:#ffffff;border:1px solid #c8c6c4;box-sizing:border-box;"></div>
<div class="t" style="left:536.80px;width:600px;text-align:center;top:228.36px;font-size:11.4px;line-height:13.68px;color:#323130;font-weight:normal;font-style:normal;letter-spacing:0px;">Add data fields here</div>
<div class="t" style="left:748.60px;top:282.92px;font-size:11.3px;line-height:13.56px;color:#484644;font-weight:normal;font-style:normal;letter-spacing:0px;">Filters on all pages</div>
<div class="t" style="left:615.00px;width:600px;text-align:center;top:284.10px;font-size:11px;line-height:13.20px;color:#605e5c;font-weight:normal;font-style:normal;letter-spacing:0px;">···</div>
<div class="r" style="left:748.50px;top:305.00px;width:176.50px;height:43.60px;background:#eaeaea;border:1px solid #c8c6c4;box-sizing:border-box;"></div>
<div class="t" style="left:757.20px;top:311.82px;font-size:11.3px;line-height:13.56px;color:#323130;font-weight:bold;font-style:normal;letter-spacing:0px;">Year</div>
<div class="t" style="left:757.20px;top:329.14px;font-size:11.1px;line-height:13.32px;color:#323130;font-weight:normal;font-style:normal;letter-spacing:0px;">is 2016 or 2017</div>
<div class="r" style="left:748.50px;top:355.00px;width:176.50px;height:43.60px;background:#ffffff;border:1px solid #c8c6c4;box-sizing:border-box;"></div>
<div class="t" style="left:536.80px;width:600px;text-align:center;top:371.76px;font-size:11.4px;line-height:13.68px;color:#323130;font-weight:normal;font-style:normal;letter-spacing:0px;">Add data fields here</div>
<div class="t" style="left:945.50px;top:103.26px;font-size:15.4px;line-height:18.48px;color:#323130;font-weight:normal;font-style:normal;letter-spacing:0px;-webkit-text-stroke:0.4px #252423;">Visualizations</div>
<svg class="r" style="left:1087px;top:103px;" width="10" height="15" viewBox="0 0 10 15"><path d="M1.8 1.8 L7.3 7.3 L1.8 12.8" fill="none" stroke="#484644" stroke-width="1.0"/></svg>
<svg class="r" style="left:938px;top:137px;" width="18" height="18" viewBox="0 0 18 18"><path d="M1.5 1 V17" stroke="#605e5c"/><rect x="3" y="2" width="8" height="4" fill="#5ea6e6" stroke="#2b88d8" stroke-width="0.6"/><rect x="3" y="8" width="12" height="3" fill="#c8c6c4" stroke="#605e5c" stroke-width="0.6"/><rect x="3" y="12.5" width="13" height="3" fill="#e1dfdd" stroke="#605e5c" stroke-width="0.6"/><path d="M1 16.5H17" stroke="#605e5c"/></svg>
<svg class="r" style="left:965px;top:137px;" width="18" height="18" viewBox="0 0 18 18"><path d="M1.5 1V16.5H17" fill="none" stroke="#605e5c"/><rect x="4" y="6" width="3.5" height="10" fill="#5ea6e6" stroke="#2b88d8" stroke-width="0.6"/><rect x="8.5" y="2" width="3" height="14" fill="#e1dfdd" stroke="#605e5c" stroke-width="0.6"/><rect x="13" y="4" width="3" height="12" fill="#e1dfdd" stroke="#605e5c" stroke-width="0.6"/></svg>
<svg class="r" style="left:992px;top:137px;" width="18" height="18" viewBox="0 0 18 18"><path d="M1.5 1V17" stroke="#605e5c"/><rect x="2.5" y="1.5" width="14" height="4" fill="#5ea6e6" stroke="#2b88d8" stroke-width="0.6"/><rect x="2.5" y="7" width="9" height="3.5" fill="#c8c6c4" stroke="#605e5c" stroke-width="0.6"/><rect x="2.5" y="12" width="12" height="3.5" fill="#e1dfdd" stroke="#605e5c" stroke-width="0.6"/><path d="M1 16.5H17" stroke="#605e5c"/></svg>
<svg class="r" style="left:1018px;top:137px;" width="18" height="18" viewBox="0 0 18 18"><path d="M1.5 1V16.5H17" fill="none" stroke="#605e5c"/><rect x="3" y="1.5" width="3.5" height="15" fill="#5ea6e6" stroke="#2b88d8" stroke-width="0.6"/><rect x="8" y="8" width="3" height="8.5" fill="#e1dfdd" stroke="#605e5c" stroke-width="0.6"/><rect x="12.5" y="5" width="3" height="11.5" fill="#e1dfdd" stroke="#605e5c" stroke-width="0.6"/></svg>
<svg class="r" style="left:1045px;top:137px;" width="18" height="18" viewBox="0 0 18 18"><path d="M1.5 1V17" stroke="#605e5c"/><rect x="3" y="2" width="13" height="4" fill="#5ea6e6" stroke="#2b88d8" stroke-width="0.6"/><rect x="3" y="8" width="13" height="3" fill="#e1dfdd" stroke="#605e5c" stroke-width="0.6"/><rect x="3" y="12.5" width="13" height="3" fill="#e1dfdd" stroke="#605e5c" stroke-width="0.6"/><path d="M1 16.5H17" stroke="#605e5c"/></svg>
<svg class="r" style="left:1072px;top:137px;" width="18" height="18" viewBox="0 0 18 18"><path d="M1.5 1V16.5H17" fill="none" stroke="#605e5c"/><rect x="4" y="2" width="3.5" height="14" fill="#5ea6e6" stroke="#2b88d8" stroke-width="0.6"/><rect x="8.5" y="2" width="3" height="14" fill="#e1dfdd" stroke="#605e5c" stroke-width="0.6"/><rect x="13" y="2" width="3" height="14" fill="#e1dfdd" stroke="#605e5c" stroke-width="0.6"/></svg>
<svg class="r" style="left:938px;top:161px;" width="18" height="18" viewBox="0 0 18 18"><path d="M1.5 1V16.5H17" fill="none" stroke="#605e5c"/><path d="M2 10 L6 5 L10 9 L16 3" fill="none" stroke="#605e5c" stroke-width="1"/><path d="M2 14 L6 9 L10 12 L16 6" fill="none" stroke="#2b88d8" stroke-width="1"/></svg>
<svg class="r" style="left:965px;top:161px;" width="18" height="18" viewBox="0 0 18 18"><path d="M1 16.5 L6 5 L10 11 L13 4 L17 16.5 Z" fill="#e1dfdd" stroke="#605e5c" stroke-width="0.8"/><path d="M1 16.5 L6 9 L10 13 L13 10 L17 16.5 Z" fill="#5ea6e6" stroke="#2b88d8" stroke-width="0.8"/></svg>
<svg class="r" style="left:992px;top:161px;" width="18" height="18" viewBox="0 0 18 18"><path d="M1.5 1V16.5H17" fill="none" stroke="#605e5c"/><path d="M2 4 L7 10 L11 5 L16 9 V12 L11 8 L7 13 L2 7 Z" fill="#5ea6e6" stroke="#2b88d8" stroke-width="0.8"/></svg>
<svg class="r" style="left:1018px;top:161px;" width="18" height="18" viewBox="0 0 18 18"><path d="M1.5 1V16.5H17" fill="none" stroke="#605e5c"/><rect x="4" y="3" width="3.5" height="13.5" fill="#5ea6e6" stroke="#2b88d8" stroke-width="0.6"/><rect x="9" y="6" width="3" height="10.5" fill="#e1dfdd" stroke="#605e5c" stroke-width="0.6"/><path d="M2 14 L7 8 L11 12 L16 5" fill="none" stroke="#605e5c"/></svg>
<svg class="r" style="left:1045px;top:161px;" width="18" height="18" viewBox="0 0 18 18"><path d="M1.5 1V16.5H17" fill="none" stroke="#605e5c"/><rect x="4" y="9" width="3" height="7.5" fill="#5ea6e6" stroke="#2b88d8" stroke-width="0.6"/><rect x="8.5" y="3" width="3" height="13.5" fill="#e1dfdd" stroke="#605e5c" stroke-width="0.6"/><path d="M2 14 L7 9 L11 12 L16 6" fill="none" stroke="#605e5c"/></svg>
<svg class="r" style="left:1072px;top:161px;" width="18" height="18" viewBox="0 0 18 18"><path d="M1.5 1V16.5H17" fill="none" stroke="#605e5c"/><path d="M2 3 Q9 10 16 3 V9 Q9 16 2 9 Z" fill="#2b88d8"/><path d="M3 12 L6 10 L10 13 L15 10" fill="none" stroke="#e8812c" stroke-width="1.5"/></svg>
<svg class="r" style="left:938px;top:183px;" width="18" height="18" viewBox="0 0 18 18"><path d="M1.5 1V16.5H17" fill="none" stroke="#605e5c"/><rect x="3" y="7" width="3" height="9.5" fill="#c8c6c4" stroke="#605e5c" stroke-width="0.6"/><rect x="7" y="10" width="3" height="6.5" fill="#e1dfdd" stroke="#605e5c" stroke-width="0.6"/><rect x="11" y="3" width="3" height="13.5" fill="#2b88d8"/><rect x="14" y="6" width="2.5" height="10.5" fill="#c8c6c4" stroke="#605e5c" stroke-width="0.6"/></svg>
<svg class="r" style="left:965px;top:183px;" width="18" height="18" viewBox="0 0 18 18"><rect x="1.5" y="2" width="15" height="4" fill="#2b88d8"/><rect x="4" y="7" width="10" height="4" fill="#2b88d8"/><rect x="6" y="12" width="6" height="4" fill="#2b88d8"/></svg>
<svg class="r" style="left:992px;top:183px;" width="18" height="18" viewBox="0 0 18 18"><path d="M1.5 1V16.5H17" fill="none" stroke="#605e5c"/><rect x="4" y="10" width="2.2" height="2.2" fill="#605e5c"/><rect x="8" y="6" width="2.2" height="2.2" fill="#5ea6e6"/><rect x="11" y="9" width="2.2" height="2.2" fill="#5ea6e6"/><rect x="13" y="3" width="2.2" height="2.2" fill="#323130"/><rect x="6" y="13" width="2.2" height="2.2" fill="#323130"/></svg>
<svg class="r" style="left:1018px;top:183px;" width="18" height="18" viewBox="0 0 18 18"><circle cx="9" cy="9" r="7.5" fill="#fff" stroke="#605e5c" stroke-width="1"/><path d="M9 9 V1.5 A7.5 7.5 0 0 1 15.5 12.5 Z" fill="#5ea6e6" stroke="#2b88d8" stroke-width="0.8"/></svg>
<svg class="r" style="left:1045px;top:183px;" width="18" height="18" viewBox="0 0 18 18"><circle cx="9" cy="9" r="6" fill="none" stroke="#5ea6e6" stroke-width="3"/><path d="M9 3 A6 6 0 0 1 15 9" fill="none" stroke="#2b88d8" stroke-width="3"/></svg>
<svg class="r" style="left:1072px;top:183px;" width="18" height="18" viewBox="0 0 18 18"><rect x="1.5" y="1.5" width="15" height="15" fill="#fff" stroke="#605e5c"/><rect x="2" y="2" width="7" height="14" fill="#5ea6e6" stroke="#2b88d8" stroke-width="0.6"/><path d="M9 8H16.5M12.5 8V16.5" stroke="#605e5c"/></svg>
<svg class="r" style="left:938px;top:206px;" width="18" height="18" viewBox="0 0 18 18"><circle cx="9" cy="8" r="6" fill="#fff" stroke="#605e5c" stroke-width="1.2"/><path d="M5.5 5 H8 V7.5 H10.5 V5 H12.5 M5.5 11 H8 V8.5 H10.5 V11 H12.5" fill="none" stroke="#2e9e4f" stroke-width="2"/><path d="M4 16.5H14 M9 14V16.5" stroke="#605e5c"/></svg>
<svg class="r" style="left:965px;top:206px;" width="18" height="18" viewBox="0 0 18 18"><path d="M1.5 3 L6 1.5 L9 3 L15 2 L16.5 6 L15 12 L10 16.5 L4 14 L1.5 9 Z" fill="#c8c6c4" stroke="#605e5c" stroke-width="0.9"/><path d="M1.5 3 L6 1.5 L7 8 L2.5 8.5 Z" fill="#5ea6e6" stroke="#2b88d8" stroke-width="0.7"/><path d="M9 9 L15.5 8 L15 12 L10 16 L8 13 Z" fill="#5ea6e6" stroke="#2b88d8" stroke-width="0.7"/></svg>
<svg class="r" style="left:992px;top:206px;" width="18" height="18" viewBox="0 0 18 18"><path d="M2 13 A7 7 0 0 1 16 13" fill="none" stroke="#605e5c" stroke-width="1"/><path d="M7 6.3 A7 7 0 0 1 16 13" fill="none" stroke="#5ea6e6" stroke-width="3"/><path d="M9 13 L12 9.5" stroke="#323130" stroke-width="1.4"/></svg>
<svg class="r" style="left:1018px;top:206px;" width="18" height="18" viewBox="0 0 18 18"><rect x="1" y="3.5" width="16" height="11" fill="#fff" stroke="#605e5c"/><rect x="3" y="5.5" width="12" height="7" fill="#e8f2fb" stroke="#5ea6e6" stroke-width="0.6"/><text x="9" y="11.3" font-size="5.5" text-anchor="middle" fill="#2b88d8" font-family="Liberation Sans">123</text></svg>
<svg class="r" style="left:1045px;top:206px;" width="18" height="18" viewBox="0 0 18 18"><rect x="1.5" y="1.5" width="15" height="15" fill="#fff" stroke="#605e5c"/><path d="M4.5 5.5H13.5M4.5 9H13.5M4.5 12.5H10" stroke="#2b88d8" stroke-width="1.2"/></svg>
<svg class="r" style="left:1072px;top:206px;" width="18" height="18" viewBox="0 0 18 18"><rect x="1.5" y="2.5" width="15" height="13" fill="#fff" stroke="#605e5c"/><path d="M4 6.5 L6.5 10 L9 6.5Z" fill="#4caf6a"/><path d="M10 10 L12.5 6 L15 10Z" fill="#e74c3c"/><path d="M3.5 12.5H14.5" stroke="#605e5c"/></svg>
<svg class="r" style="left:938px;top:229px;" width="18" height="18" viewBox="0 0 18 18"><rect x="1.5" y="1.5" width="15" height="15" fill="#fff" stroke="#605e5c"/><path d="M1.5 5.5H16.5M4 8H9M4 11H8" stroke="#605e5c"/><path d="M9 8 H17 L14 12 V17 H12 V12 Z" fill="#fff" stroke="#605e5c"/></svg>
<svg class="r" style="left:965px;top:229px;" width="18" height="18" viewBox="0 0 18 18"><rect x="1.5" y="2.5" width="15" height="13" fill="#fff" stroke="#605e5c"/><path d="M1.5 6.5H16.5M1.5 11H16.5M6.5 2.5V15.5M11.5 2.5V15.5" stroke="#605e5c" stroke-width="0.9"/></svg>
<svg class="r" style="left:992px;top:229px;" width="18" height="18" viewBox="0 0 18 18"><rect x="1.5" y="2.5" width="15" height="13" fill="#fff" stroke="#605e5c"/><rect x="1.5" y="2.5" width="15" height="4" fill="#605e5c"/><rect x="6.5" y="6.5" width="10" height="9" fill="#5ea6e6"/><path d="M1.5 11H16.5M6.5 2.5V15.5M11.5 2.5V15.5" stroke="#2b88d8" stroke-width="0.9"/></svg>
<div class="t" style="left:1021.3px;top:229.3px;font-size:15px;line-height:18px;font-weight:bold;color:#2f7fc1">R</div>
<div class="t" style="left:1043.9px;top:228.8px;font-size:15px;line-height:18px;font-weight:bold;color:#2f7fc1;letter-spacing:-0.5px">Py</div>
<svg class="r" style="left:1072px;top:229px;" width="18" height="18" viewBox="0 0 18 18"><path d="M1.5 1V17" stroke="#605e5c"/><path d="M2 4H11M2 9H8M2 14H13" stroke="#605e5c" stroke-width="1.2"/><circle cx="14" cy="4" r="2" fill="none" stroke="#2b88d8"/><circle cx="11" cy="9" r="2" fill="none" stroke="#2b88d8"/></svg>
<svg class="r" style="left:938px;top:252px;" width="18" height="18" viewBox="0 0 18 18"><rect x="1" y="6" width="5" height="5" fill="#2b88d8"/><path d="M6 8.5H9 M9 3.5V13.5 M9 3.5H11 M9 13.5H11" stroke="#605e5c" fill="none"/><rect x="11" y="1.5" width="5" height="4" fill="#5ea6e6" stroke="#2b88d8" stroke-width="0.6"/><rect x="11" y="11.5" width="5" height="4" fill="#5ea6e6" stroke="#2b88d8" stroke-width="0.6"/><rect x="11" y="6.5" width="5" height="4" fill="#5ea6e6" stroke="#2b88d8" stroke-width="0.6"/></svg>
<svg class="r" style="left:965px;top:252px;" width="18" height="18" viewBox="0 0 18 18"><path d="M1.5 2.5H16.5V12.5H7L3.5 16V12.5H1.5Z" fill="#fff" stroke="#2b88d8" stroke-width="1.1"/></svg>
<svg class="r" style="left:992px;top:252px;" width="18" height="18" viewBox="0 0 18 18"><path d="M3.5 1.5H11L14.5 5V16.5H3.5Z" fill="#fff" stroke="#605e5c"/><path d="M6 8H10M6 11H12M6 14H12" stroke="#2b88d8"/><circle cx="6" cy="5.5" r="1.3" fill="#2b88d8"/></svg>
<svg class="r" style="left:1018px;top:252px;" width="18" height="18" viewBox="0 0 18 18"><path d="M3.5 1.5H11L14.5 5V16.5H3.5Z" fill="#fff" stroke="#605e5c"/><path d="M6.5 15V11M9 15V8M11.5 15V10" stroke="#323130" stroke-width="1.4"/></svg>
<svg class="r" style="left:1045px;top:252px;" width="18" height="18" viewBox="0 0 18 18"><rect x="1.5" y="2" width="15" height="14.5" fill="#fff" stroke="#605e5c"/><path d="M2 16 L16 2 V16Z" fill="#2b88d8"/><rect x="2" y="2" width="5" height="5" fill="#e8812c"/><rect x="12" y="12" width="4" height="4" fill="#e8812c"/><path d="M5 12 L12 5" stroke="#fff" stroke-width="1.3"/></svg>
<svg class="r" style="left:1072px;top:252px;" width="18" height="18" viewBox="0 0 18 18"><path d="M9 1.5 L16.5 9 L9 16.5 L1.5 9Z" fill="none" stroke="#a05fc2" stroke-width="1.6"/><path d="M5.5 5.5 L12.5 12.5 M12.5 5.5 L5.5 12.5" stroke="#c49ad8" stroke-width="1.6"/></svg>
<svg class="r" style="left:938px;top:275px;" width="18" height="18" viewBox="0 0 18 18"><path d="M1.5 3.5 H10 L16 9.5 L10 15.5 H1.5 L7.5 9.5 Z" fill="#fff" stroke="#2b88d8" stroke-width="1.2" stroke-linejoin="round"/><path d="M5 3.5 L11 9.5 L5 15.5" fill="none" stroke="#2b88d8" stroke-width="1.1"/></svg>
<div class="t" style="left:673.60px;width:600px;text-align:center;top:274.90px;font-size:14px;line-height:16.80px;color:#323130;font-weight:normal;font-style:normal;letter-spacing:0px;">···</div>
<div class="r" style="left:935.00px;top:296.50px;width:170.00px;height:1.00px;background:#e1dfdd;"></div>
<svg class="r" style="left:954px;top:305px;" width="20" height="18" viewBox="0 0 20 18"><rect x="1.5" y="1.5" width="17" height="15" fill="none" stroke="#605e5c" stroke-width="1" stroke-dasharray="2 1.3"/><path d="M1.5 6H18.5M1.5 11H18.5" stroke="#605e5c" stroke-dasharray="2 1.3"/></svg>
<svg class="r" style="left:994px;top:304px;" width="18" height="20" viewBox="0 0 18 20"><rect x="2" y="1.5" width="12" height="5.5" rx="0.8" fill="#fff" stroke="#605e5c" stroke-width="1.2"/><path d="M14 4.5H16V10H9V13" fill="none" stroke="#605e5c" stroke-width="1.2"/><rect x="7.5" y="13" width="3" height="6" fill="#fff" stroke="#605e5c" stroke-width="1.2"/></svg>
<div class="r" style="left:945.00px;top:328.00px;width:38.50px;height:3.00px;background:#f2c80f;border-radius:1.5px;"></div>
<div class="t" style="left:945.60px;top:339.02px;font-size:11.3px;line-height:13.56px;color:#323130;font-weight:normal;font-style:normal;letter-spacing:0px;">Values</div>
<div class="r" style="left:937.60px;top:358.70px;width:163.00px;height:25.30px;background:#ffffff;border:1px dashed #d2d0ce;box-sizing:border-box;"></div>
<div class="t" style="left:948.00px;top:365.92px;font-size:11.3px;line-height:13.56px;color:#323130;font-weight:normal;font-style:normal;letter-spacing:0px;">Add data fields here</div>
<div class="t" style="left:947.70px;top:399.08px;font-size:16.2px;line-height:19.44px;color:#55534f;font-weight:normal;font-style:normal;letter-spacing:0px;-webkit-text-stroke:0.35px #55534f;">Drill through</div>
<div class="t" style="left:942.00px;top:433.02px;font-size:11.3px;line-height:13.56px;color:#323130;font-weight:normal;font-style:normal;letter-spacing:0px;">Cross-report</div>
<div class="t" style="left:951.00px;top:460.62px;font-size:11.3px;line-height:13.56px;color:#323130;font-weight:normal;font-style:normal;letter-spacing:0px;">Off</div>
<svg class="r" style="left:970px;top:460.5px;" width="32" height="13" viewBox="0 0 32 13"><circle cx="6.5" cy="6.5" r="4.8" fill="#fff" stroke="#323130" stroke-width="1.6"/><path d="M11.3 6.5H29.5" stroke="#323130" stroke-width="1.5"/></svg>
<div class="t" style="left:942.00px;top:494.52px;font-size:11.3px;line-height:13.56px;color:#323130;font-weight:normal;font-style:normal;letter-spacing:0px;">Keep all filters</div>
<div class="t" style="left:951.00px;top:521.82px;font-size:11.3px;line-height:13.56px;color:#323130;font-weight:normal;font-style:normal;letter-spacing:0px;">Off</div>
<svg class="r" style="left:970px;top:521.5px;" width="32" height="13" viewBox="0 0 32 13"><circle cx="6.5" cy="6.5" r="4.8" fill="#fff" stroke="#323130" stroke-width="1.6"/><path d="M11.3 6.5H29.5" stroke="#323130" stroke-width="1.5"/></svg>
<div class="r" style="left:937.60px;top:549.20px;width:163.00px;height:24.50px;background:#ffffff;border:1px dashed #d2d0ce;box-sizing:border-box;"></div>
<div class="t" style="left:946.00px;top:555.24px;font-size:11.6px;line-height:13.92px;color:#323130;font-weight:normal;font-style:normal;letter-spacing:0px;">Add drill-through fields here</div>
<div class="t" style="left:1115.00px;top:98.82px;font-size:14.8px;line-height:17.76px;color:#323130;font-weight:normal;font-style:normal;letter-spacing:0px;-webkit-text-stroke:0.4px #252423;">Fields</div>
<svg class="r" style="left:1258px;top:100px;" width="16" height="15" viewBox="0 0 16 15"><path d="M2 1.5 L8 7.5 L2 13.5 M7.5 1.5 L13.5 7.5 L7.5 13.5" fill="none" stroke="#323130" stroke-width="1.3"/></svg>
<div class="r" style="left:1111.00px;top:132.50px;width:164.70px;height:25.20px;background:#ffffff;border:1px solid #8a8886;box-sizing:border-box;"></div>
<svg class="r" style="left:1118px;top:136.5px;" width="17" height="17" viewBox="0 0 17 17"><circle cx="10" cy="6.5" r="4.6" fill="none" stroke="#323130" stroke-width="1.2"/><path d="M6.8 9.8 L1.8 14.8" stroke="#323130" stroke-width="1.3"/></svg>
<div class="t" style="left:1139.40px;top:137.82px;font-size:12.3px;line-height:14.76px;color:#605e5c;font-weight:normal;font-style:normal;letter-spacing:0px;">Search</div>
<div class="r" style="left:1268.60px;top:166.00px;width:7.00px;height:152.40px;background:#c8c6c4;"></div>
<svg class="r" style="left:1116px;top:173px;" width="7" height="11" viewBox="0 0 7 11"><path d="M1.5 1.5 L5.5 5.5 L1.5 9.5" fill="none" stroke="#605e5c" stroke-width="1"/></svg>
<svg class="r" style="left:1128px;top:172.5px;" width="14" height="13" viewBox="0 0 14 13"><rect x="1.5" y="1.5" width="11" height="10" fill="none" stroke="#323130" stroke-width="1"/><path d="M1.5 4.5H12.5M1.5 7.5H12.5M5 1.5V11.5M8.5 1.5V11.5" stroke="#323130" stroke-width="0.8"/><rect x="1.5" y="1.5" width="11" height="2" fill="#323130"/></svg>
<div class="t" style="left:1146.50px;top:173.48px;font-size:11.2px;line-height:13.44px;color:#3b3a39;font-weight:normal;font-style:normal;letter-spacing:0px;">AW_Calendar_Lookup</div>
<svg class="r" style="left:1114px;top:198px;" width="11" height="7" viewBox="0 0 11 7"><path d="M1 1 L5.5 5.5 L10 1" fill="none" stroke="#605e5c" stroke-width="1"/></svg>
<svg class="r" style="left:1128px;top:195.7px;" width="14" height="13" viewBox="0 0 14 13"><rect x="1.5" y="1.5" width="11" height="10" fill="none" stroke="#323130" stroke-width="1"/><path d="M1.5 4.5H12.5M1.5 7.5H12.5M5 1.5V11.5M8.5 1.5V11.5" stroke="#323130" stroke-width="0.8"/><rect x="1.5" y="1.5" width="11" height="2" fill="#323130"/></svg>
<div class="t" style="left:1146.50px;top:196.58px;font-size:11.2px;line-height:13.44px;color:#3b3a39;font-weight:normal;font-style:normal;letter-spacing:0px;">AW_Customer_Lookup</div>
<div class="r" style="left:1143.50px;top:218.70px;width:11.50px;height:11.50px;background:#fbfbfb;border:1px solid #8a8886;box-sizing:border-box;border-radius:1px;"></div>
<svg class="r" style="left:1162px;top:218px;" width="13" height="14" viewBox="0 0 13 14"><path d="M11 2.5V1.5H2L7 7L2 12.5H11V11.5" fill="none" stroke="#323130" stroke-width="1.1"/></svg>
<div class="t" style="left:1180.20px;top:219.08px;font-size:11.2px;line-height:13.44px;color:#3b3a39;font-weight:normal;font-style:normal;letter-spacing:0px;">AnnualIncome</div>
<div class="r" style="left:1143.50px;top:241.75px;width:11.50px;height:11.50px;background:#fbfbfb;border:1px solid #8a8886;box-sizing:border-box;border-radius:1px;"></div>
<svg class="r" style="left:1160px;top:241px;" width="15" height="14" viewBox="0 0 15 14"><rect x="1.5" y="2" width="12" height="11" fill="none" stroke="#323130"/><rect x="1.5" y="2" width="12" height="2.5" fill="#323130"/><path d="M4 7H5M7 7H8M10 7H11M4 9.5H5M7 9.5H8M10 9.5H11" stroke="#323130"/></svg>
<svg class="r" style="left:1131px;top:243px;" width="7" height="11" viewBox="0 0 7 11"><path d="M1.5 1.5 L5.5 5.5 L1.5 9.5" fill="none" stroke="#605e5c" stroke-width="1"/></svg>
<div class="t" style="left:1180.20px;top:242.13px;font-size:11.2px;line-height:13.44px;color:#3b3a39;font-weight:normal;font-style:normal;letter-spacing:0px;">BirthDate</div>
<div class="r" style="left:1143.50px;top:264.80px;width:11.50px;height:11.50px;background:#fbfbfb;border:1px solid #8a8886;box-sizing:border-box;border-radius:1px;"></div>
<svg class="r" style="left:1160px;top:264px;" width="16" height="15" viewBox="0 0 16 15"><rect x="1.5" y="1.5" width="10" height="11" fill="none" stroke="#323130"/><path d="M1.5 4.5H11.5M4.5 1.5V12.5M1.5 8H11.5" stroke="#323130" stroke-width="0.8"/><rect x="9" y="7" width="7" height="8" fill="#f3f2f1"/><text x="12.3" y="14" font-size="7" text-anchor="middle" fill="#323130" font-family="Liberation Sans" font-style="italic">Σ</text></svg>
<div class="t" style="left:1180.20px;top:265.18px;font-size:11.2px;line-height:13.44px;color:#3b3a39;font-weight:normal;font-style:normal;letter-spacing:0px;">BirthYear_CC</div>
<div class="r" style="left:1143.50px;top:287.85px;width:11.50px;height:11.50px;background:#fbfbfb;border:1px solid #8a8886;box-sizing:border-box;border-radius:1px;"></div>
<svg class="r" style="left:1160px;top:287px;" width="16" height="15" viewBox="0 0 16 15"><rect x="1.5" y="1.5" width="10" height="11" fill="none" stroke="#323130"/><path d="M1.5 4.5H11.5M4.5 1.5V12.5M1.5 8H11.5" stroke="#323130" stroke-width="0.8"/><rect x="9" y="7" width="7" height="8" fill="#f3f2f1"/><text x="12.3" y="14" font-size="7" text-anchor="middle" fill="#323130" font-family="Liberation Sans" font-style="italic">Σ</text></svg>
<div class="t" style="left:1180.20px;top:288.23px;font-size:11.2px;line-height:13.44px;color:#3b3a39;font-weight:normal;font-style:normal;letter-spacing:0px;">Current Age</div>
<div class="r" style="left:1143.50px;top:310.90px;width:11.50px;height:11.50px;background:#fbfbfb;border:1px solid #8a8886;box-sizing:border-box;border-radius:1px;"></div>
<svg class="r" style="left:1160px;top:310px;" width="16" height="15" viewBox="0 0 16 15"><rect x="1.5" y="1.5" width="10" height="11" fill="none" stroke="#323130"/><path d="M1.5 4.5H11.5M4.5 1.5V12.5M1.5 8H11.5" stroke="#323130" stroke-width="0.8"/><rect x="9" y="7" width="7" height="8" fill="#f3f2f1"/><text x="12.3" y="14" font-size="7" text-anchor="middle" fill="#323130" font-family="Liberation Sans" font-style="italic">fx</text></svg>
<div class="t" style="left:1180.20px;top:311.28px;font-size:11.2px;line-height:13.44px;color:#3b3a39;font-weight:normal;font-style:normal;letter-spacing:0px;">Customer Prior...</div>
<div class="r" style="left:1143.50px;top:333.95px;width:11.50px;height:11.50px;background:#fbfbfb;border:1px solid #8a8886;box-sizing:border-box;border-radius:1px;"></div>
<div class="t" style="left:1180.20px;top:334.33px;font-size:11.2px;line-height:13.44px;color:#3b3a39;font-weight:normal;font-style:normal;letter-spacing:0px;">CustomerKey</div>
<div class="r" style="left:1143.50px;top:357.00px;width:11.50px;height:11.50px;background:#fbfbfb;border:1px solid #8a8886;box-sizing:border-box;border-radius:1px;"></div>
<div class="t" style="left:1180.20px;top:357.38px;font-size:11.2px;line-height:13.44px;color:#3b3a39;font-weight:normal;font-style:normal;letter-spacing:0px;">Domain</div>
<div class="r" style="left:1143.50px;top:380.05px;width:11.50px;height:11.50px;background:#fbfbfb;border:1px solid #8a8886;box-sizing:border-box;border-radius:1px;"></div>
<div class="t" style="left:1180.20px;top:380.43px;font-size:11.2px;line-height:13.44px;color:#3b3a39;font-weight:normal;font-style:normal;letter-spacing:0px;">EducationLevel</div>
<div class="r" style="left:1143.50px;top:403.10px;width:11.50px;height:11.50px;background:#fbfbfb;border:1px solid #8a8886;box-sizing:border-box;border-radius:1px;"></div>
<div class="t" style="left:1180.20px;top:403.48px;font-size:11.2px;line-height:13.44px;color:#3b3a39;font-weight:normal;font-style:normal;letter-spacing:0px;">EmailAddress</div>
<div class="r" style="left:1143.50px;top:426.15px;width:11.50px;height:11.50px;background:#fbfbfb;border:1px solid #8a8886;box-sizing:border-box;border-radius:1px;"></div>
<div class="t" style="left:1180.20px;top:426.53px;font-size:11.2px;line-height:13.44px;color:#3b3a39;font-weight:normal;font-style:normal;letter-spacing:0px;">FirstName</div>
<div class="r" style="left:1143.50px;top:449.20px;width:11.50px;height:11.50px;background:#fbfbfb;border:1px solid #8a8886;box-sizing:border-box;border-radius:1px;"></div>
<div class="t" style="left:1180.20px;top:449.58px;font-size:11.2px;line-height:13.44px;color:#3b3a39;font-weight:normal;font-style:normal;letter-spacing:0px;">FullName</div>
<div class="r" style="left:1143.50px;top:472.25px;width:11.50px;height:11.50px;background:#fbfbfb;border:1px solid #8a8886;box-sizing:border-box;border-radius:1px;"></div>
<svg class="r" style="left:1160px;top:472px;" width="16" height="15" viewBox="0 0 16 15"><rect x="1.5" y="1.5" width="10" height="11" fill="none" stroke="#323130"/><path d="M1.5 4.5H11.5M4.5 1.5V12.5M1.5 8H11.5" stroke="#323130" stroke-width="0.8"/><rect x="9" y="7" width="7" height="8" fill="#f3f2f1"/><text x="12.3" y="14" font-size="7" text-anchor="middle" fill="#323130" font-family="Liberation Sans" font-style="italic">fx</text></svg>
<div class="t" style="left:1180.20px;top:472.63px;font-size:11.2px;line-height:13.44px;color:#3b3a39;font-weight:normal;font-style:normal;letter-spacing:0px;">FullName_CC</div>
<div class="r" style="left:1143.50px;top:495.30px;width:11.50px;height:11.50px;background:#fbfbfb;border:1px solid #8a8886;box-sizing:border-box;border-radius:1px;"></div>
<div class="t" style="left:1180.20px;top:495.68px;font-size:11.2px;line-height:13.44px;color:#3b3a39;font-weight:normal;font-style:normal;letter-spacing:0px;">Gender</div>
<div class="r" style="left:1143.50px;top:518.35px;width:11.50px;height:11.50px;background:#fbfbfb;border:1px solid #8a8886;box-sizing:border-box;border-radius:1px;"></div>
<div class="t" style="left:1180.20px;top:518.73px;font-size:11.2px;line-height:13.44px;color:#3b3a39;font-weight:normal;font-style:normal;letter-spacing:0px;">HomeOwner</div>
<div class="r" style="left:1143.50px;top:541.40px;width:11.50px;height:11.50px;background:#fbfbfb;border:1px solid #8a8886;box-sizing:border-box;border-radius:1px;"></div>
<div class="t" style="left:1180.20px;top:541.78px;font-size:11.2px;line-height:13.44px;color:#3b3a39;font-weight:normal;font-style:normal;letter-spacing:0px;">IncomeLevel</div>
<div class="r" style="left:1143.50px;top:564.45px;width:11.50px;height:11.50px;background:#fbfbfb;border:1px solid #8a8886;box-sizing:border-box;border-radius:1px;"></div>
<div class="t" style="left:1180.20px;top:564.83px;font-size:11.2px;line-height:13.44px;color:#3b3a39;font-weight:normal;font-style:normal;letter-spacing:0px;">LastName</div>
<div class="r" style="left:1143.50px;top:587.50px;width:11.50px;height:11.50px;background:#fbfbfb;border:1px solid #8a8886;box-sizing:border-box;border-radius:1px;"></div>
<div class="t" style="left:1180.20px;top:587.88px;font-size:11.2px;line-height:13.44px;color:#3b3a39;font-weight:normal;font-style:normal;letter-spacing:0px;">MaritalStatus</div>
<svg class="r" style="left:14px;top:590px;" width="6" height="10" viewBox="0 0 6 10"><path d="M5 1.5 L1.5 5 L5 8.5 Z" fill="#c8c6c4"/></svg>
<svg class="r" style="left:35px;top:590px;" width="6" height="10" viewBox="0 0 6 10"><path d="M1.5 1.5 L5 5 L1.5 8.5 Z" fill="#c8c6c4"/></svg>
<div class="r" style="left:47.00px;top:577.00px;width:1.20px;height:34.00px;background:#c8c6c4;"></div>
<div class="r" style="left:160.00px;top:577.00px;width:1.00px;height:34.00px;background:#e1dfdd;"></div>
<div class="t" style="left:-195.00px;width:600px;text-align:center;top:588.16px;font-size:11.4px;line-height:13.68px;color:#323130;font-weight:normal;font-style:normal;letter-spacing:0px;">Exec Summary</div>
<div class="t" style="left:-84.20px;width:600px;text-align:center;top:588.16px;font-size:11.4px;line-height:13.68px;color:#323130;font-weight:normal;font-style:normal;letter-spacing:0px;">Product Detail</div>
<div class="r" style="left:272.00px;top:577.00px;width:123.50px;height:34.00px;background:#ffffff;"></div>
<div class="r" style="left:272.00px;top:606.80px;width:123.50px;height:3.50px;background:#f2c80f;"></div>
<div class="t" style="left:33.00px;width:600px;text-align:center;top:588.16px;font-size:11.4px;line-height:13.68px;color:#252423;font-weight:normal;font-style:normal;letter-spacing:0px;-webkit-text-stroke:0.25px #252423;">Customer Detail</div>
<div class="r" style="left:395.50px;top:579.50px;width:37.50px;height:30.30px;background:#f2c80f;"></div>
<svg class="r" style="left:407px;top:587px;" width="14" height="14" viewBox="0 0 14 14"><path d="M7 1.5V12.5M1.5 7H12.5" stroke="#6a5e2a" stroke-width="2.4"/></svg>
<div class="t" style="left:2.30px;top:616.62px;font-size:11.3px;line-height:13.56px;color:#484644;font-weight:normal;font-style:normal;letter-spacing:0px;">3 of 3</div>
</body></html>
